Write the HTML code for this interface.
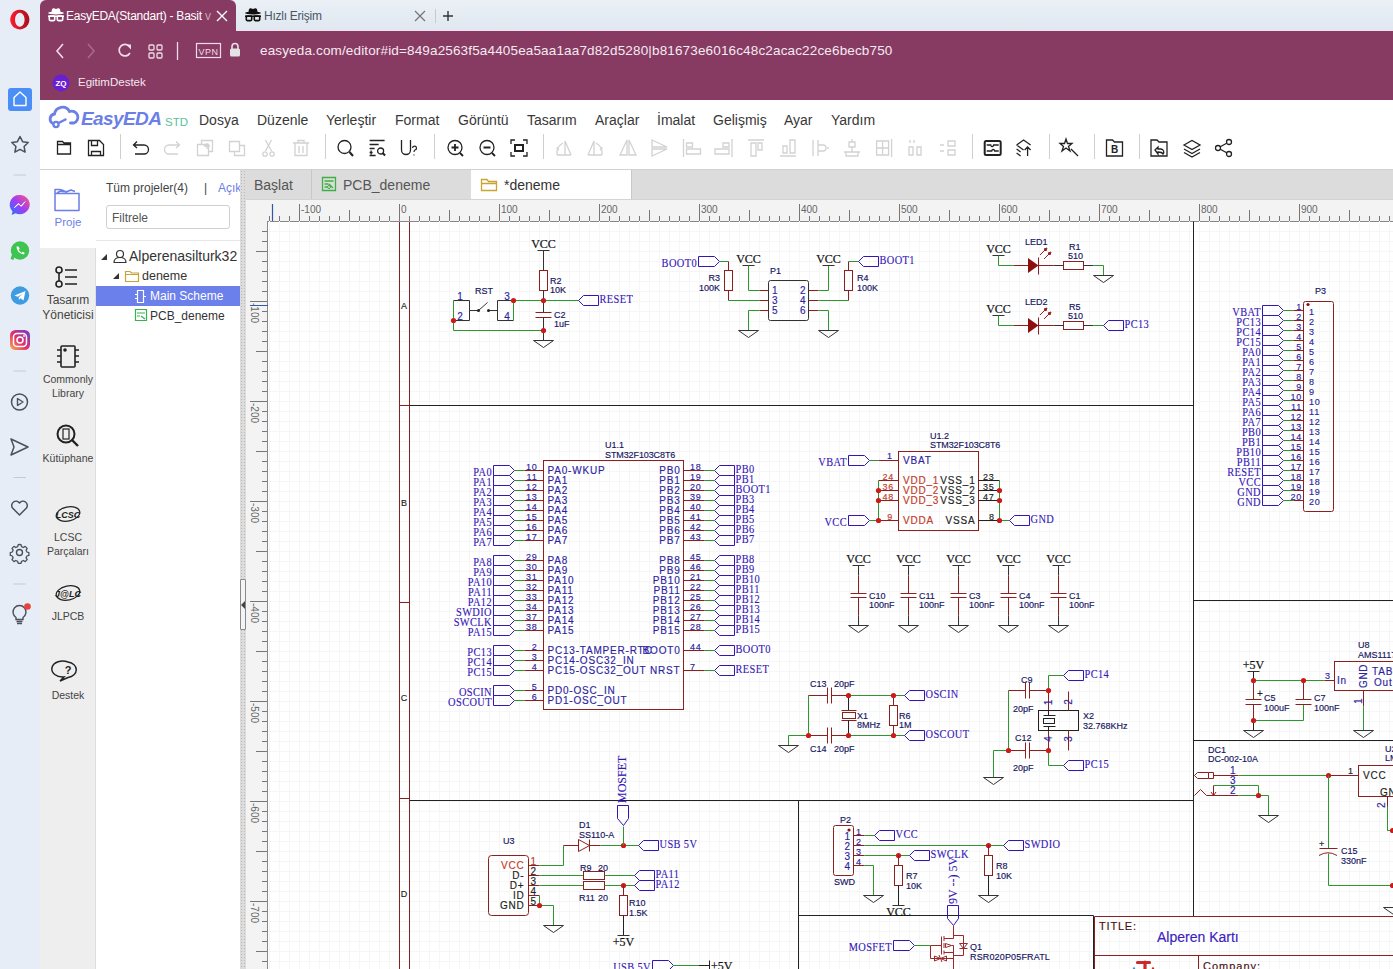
<!DOCTYPE html>
<html><head><meta charset="utf-8">
<style>
*{margin:0;padding:0;box-sizing:border-box}
html,body{width:1393px;height:969px;overflow:hidden;background:#fff;font-family:"Liberation Sans",sans-serif}
.abs{position:absolute}
.t{position:absolute;white-space:nowrap;line-height:1}
#opera{left:0;top:0;width:40px;height:969px;background:#e6edf6}
#tabbar{left:40px;top:0;width:1353px;height:31px;background:linear-gradient(#ebf0f6,#dfe7f0)}
#acttab{left:40px;top:0;width:196px;height:31px;background:#873b63;border-radius:6px 6px 0 0}
#addr{left:40px;top:31px;width:1353px;height:69px;background:#873b63}
#menu{left:40px;top:100px;width:1353px;height:69px;background:#fff}
#menuline{left:40px;top:169px;width:1353px;height:1px;background:#d2d2d2}
#iconcol{left:40px;top:170px;width:56px;height:799px;background:#eeeeee;border-right:1px solid #dedede}
#proj{left:40px;top:170px;width:56px;height:78px;background:#fff}
#tree{left:96px;top:170px;width:144px;height:799px;background:#fff}
#split{z-index:5;left:240px;top:170px;width:6px;height:800px;background:#dcdcdc;background-image:radial-gradient(#b9b9b9 0.8px,transparent 1px);background-size:3px 3px}
#doctabs{left:246px;top:170px;width:1147px;height:30px;background:#dcdcdc}
#ruler{left:246px;top:200px;width:1147px;height:770px;background:#f3f3f3}
#canvas{left:268px;top:221px;width:1125px;height:748px;background:#fff}
.menu{font-size:14px;color:#383838;top:112.5px}
.lbl{font-size:11px;color:#444;text-align:center;width:56px;left:40px}
</style></head><body>
<div id="opera" class="abs"></div>
<div id="tabbar" class="abs"></div>
<div id="acttab" class="abs"></div>
<div id="addr" class="abs"></div>
<div id="menu" class="abs"></div>
<div id="menuline" class="abs"></div>
<div class="abs" style="left:236px;top:30px;width:1157px;height:1px;background:#f3dcec"></div>
<div id="iconcol" class="abs"></div>
<div id="proj" class="abs"></div>
<div id="tree" class="abs"></div>
<div id="split" class="abs"></div>
<div id="doctabs" class="abs"></div>
<div id="ruler" class="abs"></div>
<div id="canvas" class="abs"></div>

<!-- Opera sidebar icons -->
<svg class="abs" style="left:0;top:0" width="40" height="969">
 <defs><linearGradient id="gop" x1="0" y1="0" x2="1" y2="0"><stop offset="0" stop-color="#ff1b2d"/><stop offset="1" stop-color="#a8101e"/></linearGradient></defs>
 <path d="M19.8 9.8a9.6 9.8 0 1 0 0.01 0z M19.8 12.8a4.8 7 0 1 1 -0.01 0z" fill="url(#gop)" fill-rule="evenodd"/>
 <rect x="8" y="88" width="24" height="23" rx="3" fill="#4b8ef6"/>
 <path d="M14 105.5V97.5L20 92L26 97.5V105.5Z" fill="none" stroke="#fff" stroke-width="1.4" stroke-linejoin="round"/>
 <path d="M20 136.5l2.6 5.2l5.6.8l-4.1 4l1 5.6l-5.1-2.7l-5.1 2.7l1-5.6l-4.1-4l5.6-.8z" fill="none" stroke="#4a505c" stroke-width="1.5" stroke-linejoin="round"/>
 <path d="M13.5 175H26M13.5 371H26M13.5 477.5H26M13.5 584H26" stroke="#c5cad3" stroke-width="1"/>
 <defs>
  <linearGradient id="gm" x1="0" y1="1" x2="1" y2="0"><stop offset="0" stop-color="#1a7bff"/><stop offset=".5" stop-color="#a33bf2"/><stop offset="1" stop-color="#ff5a7c"/></linearGradient>
  <linearGradient id="gi" x1="0" y1="1" x2="1" y2="0"><stop offset="0" stop-color="#fdb245"/><stop offset=".45" stop-color="#e3306a"/><stop offset="1" stop-color="#6a3bd2"/></linearGradient>
 </defs>
 <path d="M20 195a10 9.6 0 1 1 -4.5 18.3l-3.8 1.6l.8-3.6a9.6 9.6 0 0 1 7.5 -16.3z" fill="url(#gm)"/>
 <path d="M14.5 207.5l3.8-4l2.6 2.4l4.2-4.2l-3.8 4.6l-2.6-2.4z" fill="#fff" stroke="#fff" stroke-width="1"/>
 <circle cx="20" cy="250.5" r="9.2" fill="#3fc351"/>
 <path d="M12 259.5l1.2-4" stroke="#3fc351" stroke-width="3"/>
 <path d="M16.5 246.5q0 6 7 8l1.4-1.6l-2.2-1.2l-1 1q-2-1-3-3l1-1l-1.2-2.2z" fill="#fff"/>
 <circle cx="20" cy="295.5" r="9.2" fill="#3f9ce0"/>
 <path d="M14.5 295.5l11-4.5l-2 9.5l-3-2.2l-1.5 1.8l-.3-2.8l4-3.6l-5 3z" fill="#fff"/>
 <rect x="10" y="330" width="20" height="20" rx="5.5" fill="url(#gi)"/>
 <rect x="13.5" y="333.5" width="13" height="13" rx="3.5" fill="none" stroke="#fff" stroke-width="1.5"/>
 <circle cx="20" cy="340" r="3" fill="none" stroke="#fff" stroke-width="1.5"/>
 <circle cx="24" cy="336" r=".9" fill="#fff"/>
 <circle cx="19.5" cy="402" r="8" fill="none" stroke="#4a505c" stroke-width="1.5"/>
 <path d="M17.5 398.5v7l5.5-3.5z" fill="none" stroke="#4a505c" stroke-width="1.4" stroke-linejoin="round"/>
 <path d="M11 439l17 8l-17 8l3-8z" fill="none" stroke="#4a505c" stroke-width="1.5" stroke-linejoin="round"/>
 <path d="M19.5 515l-7-7a4 4 0 0 1 7-5a4 4 0 0 1 7 5z" fill="none" stroke="#4a505c" stroke-width="1.5" stroke-linejoin="round"/>
 <circle cx="19.5" cy="552.5" r="3" fill="none" stroke="#4a505c" stroke-width="1.4"/>
 <path d="M19.5 544.5l1.5 .2l.6 2l1.8 .8l1.8-1.1l2 2l-1.1 1.8l.8 1.8l2 .6v2.8l-2 .6l-.8 1.8l1.1 1.8l-2 2l-1.8-1.1l-1.8 .8l-.6 2h-2.8l-.6-2l-1.8-.8l-1.8 1.1l-2-2l1.1-1.8l-.8-1.8l-2-.6v-2.8l2-.6l.8-1.8l-1.1-1.8l2-2l1.8 1.1l1.8-.8l.6-2z" fill="none" stroke="#4a505c" stroke-width="1.3" stroke-linejoin="round"/>
 <path d="M16 617.5a6.5 6.5 0 1 1 7 0v2h-7z M16.5 621.5h6M17 623.5h5" fill="none" stroke="#4a505c" stroke-width="1.4"/>
 <circle cx="27.5" cy="606.5" r="3.3" fill="#e8423a"/>
</svg>

<!-- tab bar -->
<svg class="abs" style="left:47px;top:7px" width="18" height="16">
 <path d="M4.5 5.2Q4.6 1 6.8 1.3L9 2.1L11.2 1.3Q13.4 1 13.5 5.2Z" fill="#fff"/>
 <ellipse cx="9" cy="6" rx="8" ry="1.5" fill="#fff"/>
 <path d="M1 9.2H17" stroke="#fff" stroke-width="1.6"/>
 <rect x="2.3" y="9" width="5.4" height="4.6" rx="1" fill="none" stroke="#fff" stroke-width="1.6"/>
 <rect x="10.3" y="9" width="5.4" height="4.6" rx="1" fill="none" stroke="#fff" stroke-width="1.6"/>
</svg>
<div class="t" style="left:66px;top:10px;font-size:12px;letter-spacing:-0.25px;color:#fff">EasyEDA(Standart) - Basit <span style="color:#c9a3b6">v</span></div>
<svg class="abs" style="left:216px;top:10px" width="12" height="12"><path d="M1 1L11 11M11 1L1 11" stroke="#fff" stroke-width="1.4"/></svg>
<svg class="abs" style="left:244px;top:7px" width="18" height="16">
 <path d="M4.5 5.2Q4.6 1 6.8 1.3L9 2.1L11.2 1.3Q13.4 1 13.5 5.2Z" fill="#111"/>
 <ellipse cx="9" cy="6" rx="8" ry="1.5" fill="#111"/>
 <path d="M1 9.2H17" stroke="#111" stroke-width="1.6"/>
 <rect x="2.3" y="9" width="5.4" height="4.6" rx="1" fill="none" stroke="#111" stroke-width="1.6"/>
 <rect x="10.3" y="9" width="5.4" height="4.6" rx="1" fill="none" stroke="#111" stroke-width="1.6"/>
</svg>
<div class="t" style="left:264px;top:10px;font-size:12px;letter-spacing:-0.25px;color:#4a5563">Hızlı Erişim</div>
<svg class="abs" style="left:414px;top:9px" width="40" height="14">
 <path d="M1 2L11 12M11 2L1 12" stroke="#777" stroke-width="1.3"/>
 <path d="M21.5 0V14" stroke="#c5cbd3"/>
 <path d="M29 7H39M34 2V12" stroke="#333" stroke-width="1.4"/>
</svg>

<!-- address bar -->
<svg class="abs" style="left:50px;top:40px" width="190" height="22">
 <path d="M13 4L7 11L13 18" fill="none" stroke="#f0dce6" stroke-width="1.6"/>
 <path d="M38 4L44 11L38 18" fill="none" stroke="#a86a8a" stroke-width="1.6"/>
 <path d="M79.5 6.5A5.8 5.8 0 1 0 80 13" fill="none" stroke="#f0dce6" stroke-width="1.7"/>
 <path d="M76 4.5h5v5z" fill="#f0dce6"/>
 <rect x="99" y="5" width="5" height="5" rx="1" fill="none" stroke="#f0dce6" stroke-width="1.3"/>
 <rect x="107" y="5" width="5" height="5" rx="1" fill="none" stroke="#f0dce6" stroke-width="1.3"/>
 <rect x="99" y="13" width="5" height="5" rx="1" fill="none" stroke="#f0dce6" stroke-width="1.3"/>
 <rect x="107" y="13" width="5" height="5" rx="1" fill="none" stroke="#f0dce6" stroke-width="1.3"/>
 <path d="M127.5 2V20" stroke="#f0dce6" stroke-width="1.3"/>
 <rect x="146.5" y="3.5" width="24" height="14" fill="none" stroke="#f0dce6" stroke-width="1.2"/>
 <text x="158.5" y="14.5" font-size="9" fill="#f0dce6" text-anchor="middle" font-family="'Liberation Sans',sans-serif" letter-spacing="0.5">VPN</text>
 <rect x="180" y="8.5" width="10" height="8" rx="1.5" fill="#e3e3e6"/>
 <path d="M182 9V6.5a3 3 0 0 1 6 0v2.5" fill="none" stroke="#e3e3e6" stroke-width="1.6"/>
</svg>
<div class="t" style="left:260px;top:44px;font-size:13.5px;color:#f6eaf1;letter-spacing:0.15px">easyeda.com/editor#id=849a2563f5a4405ea5aa1aa7d82d5280|b81673e6016c48c2acac22ce6becb750</div>

<!-- bookmark -->
<svg class="abs" style="left:52px;top:74px" width="18" height="18">
 <circle cx="9" cy="9" r="8.5" fill="#6a1fd0"/>
 <text x="9" y="12" font-size="8" font-weight="bold" fill="#fff" text-anchor="middle" font-family="'Liberation Sans',sans-serif">ZQ</text>
</svg>
<div class="t" style="left:78px;top:77px;font-size:11.5px;color:#f5e6ee">EgitimDestek</div>

<!-- EasyEDA logo -->
<svg class="abs" style="left:46px;top:104px" width="146" height="30">
 <path d="M7 19.5a5 5 0 0 1 1.5-9.5a8 8 0 0 1 15-2.5a6 6 0 0 1 4.5 11.5h-3.5" fill="none" stroke="#6b7fe6" stroke-width="2.8" stroke-linecap="round"/>
 <circle cx="10" cy="20.5" r="2.6" fill="none" stroke="#6b7fe6" stroke-width="2.3"/>
 <path d="M12.5 19l7-3.5" stroke="#6b7fe6" stroke-width="2.4" stroke-linecap="round"/>
 <text x="35" y="20.5" font-size="19" font-weight="bold" font-style="italic" fill="#6b7fe6" font-family="'Liberation Sans',sans-serif" letter-spacing="-0.6">EasyEDA</text>
 <text x="119" y="21.5" font-size="11.5" fill="#5bbf9c" font-family="'Liberation Sans',sans-serif">STD</text>
</svg>
<div class="t menu" style="left:199px">Dosya</div>
<div class="t menu" style="left:257px">Düzenle</div>
<div class="t menu" style="left:326px">Yerleştir</div>
<div class="t menu" style="left:395px">Format</div>
<div class="t menu" style="left:458px">Görüntü</div>
<div class="t menu" style="left:527px">Tasarım</div>
<div class="t menu" style="left:595px">Araçlar</div>
<div class="t menu" style="left:657px">İmalat</div>
<div class="t menu" style="left:713px">Gelişmiş</div>
<div class="t menu" style="left:784px">Ayar</div>
<div class="t menu" style="left:831px">Yardım</div>

<svg class="abs" style="left:0;top:0" width="1393" height="170"><path d="M120.5 134V159" stroke="#cfcfcf" stroke-width="1"/><path d="M325.5 134V159" stroke="#cfcfcf" stroke-width="1"/><path d="M434.5 134V159" stroke="#cfcfcf" stroke-width="1"/><path d="M543.5 134V159" stroke="#cfcfcf" stroke-width="1"/><path d="M972.5 134V159" stroke="#cfcfcf" stroke-width="1"/><path d="M1049.5 134V159" stroke="#cfcfcf" stroke-width="1"/><path d="M1094.5 134V159" stroke="#cfcfcf" stroke-width="1"/><path d="M1139.5 134V159" stroke="#cfcfcf" stroke-width="1"/><g transform="translate(64 148)" stroke="#222" fill="none" stroke-width="1.3"><path d="M-6.5 -3.5h13v9.5h-13z M-6.5 -3.5v-3h5l1.5 1.5h6.5v1.5"/></g><g transform="translate(96 148)" stroke="#222" fill="none" stroke-width="1.3"><path d="M-7.5 -7.5h11l4 4v11h-15z M-4.5 -7.5v5h6v-5 M-4.5 7.5v-4h9v4"/></g><g transform="translate(141 148)" stroke="#222" fill="none" stroke-width="1.3"><path d="M-7 -3h10a4.5 4.5 0 0 1 0 9h-9 M-4 -6.5l-3.5 3.5l3.5 3"/></g><g transform="translate(172 148)" stroke="#d2d2d2" fill="none" stroke-width="1.3"><path d="M7 -3h-10a4.5 4.5 0 0 0 0 9h9 M4 -6.5l3.5 3.5l-3.5 3"/></g><g transform="translate(205 148)" stroke="#d2d2d2" fill="none" stroke-width="1.3"><path d="M-7.5 -3.5h11v11h-11z M-3.5 -3.5v-4h11v11h-4 M2 -5v6M-1 -2h6"/></g><g transform="translate(237 148)" stroke="#d2d2d2" fill="none" stroke-width="1.3"><path d="M-7.5 -6.5h10v10h-10z M-2.5 3.5v4h10v-10h-5"/></g><g transform="translate(268.5 148)" stroke="#d2d2d2" fill="none" stroke-width="1.3"><path d="M-3 -8l6 11M3 -8l-6 11"/><circle cx="-3.5" cy="6" r="2.2"/><circle cx="3.5" cy="6" r="2.2"/></g><g transform="translate(301 148)" stroke="#d2d2d2" fill="none" stroke-width="1.3"><path d="M-8 -5h16M-3 -5v-2.5h6v2.5M-6 -5v12.5h12v-12.5M-2 -2v7M2 -2v7"/></g><g transform="translate(345.5 148)" stroke="#222" fill="none" stroke-width="1.3"><circle cx="-1" cy="-1" r="6.5"/><path d="M4 4l3.5 4" stroke-width="2"/></g><g transform="translate(377.6 148)" stroke="#222" fill="none" stroke-width="1.3"><path d="M-8 -7.5h15M-8 -3.5h9M-8 0.5h5M-8 7.5h6M-6.5 2.5v4M-8 4.5h3"/><circle cx="3" cy="3" r="3"/><path d="M5 5l2.5 2.5" stroke-width="2"/></g><g transform="translate(409 148)" stroke="#222" fill="none" stroke-width="1.3"><path d="M-7.5 -8v10a4.5 4.5 0 0 0 9 0v-10"/><path d="M3.5 0a2 2 0 1 1 2.5 2c-1 .5-1 1-1 2M5 6.5v1" stroke-width="1.2"/></g><g transform="translate(455 148)" stroke="#222" fill="none" stroke-width="1.3"><circle cx="0" cy="-0.5" r="7"/><path d="M-3.5 -0.5h7M0 -4v7M5 5l3 3" stroke-width="1.8"/></g><g transform="translate(487 148)" stroke="#222" fill="none" stroke-width="1.3"><circle cx="0" cy="-0.5" r="7"/><path d="M-3.5 -0.5h7M5 5l3 3" stroke-width="1.8"/></g><g transform="translate(519 148)" stroke="#222" fill="none" stroke-width="1.3"><path d="M-8 -4v-4h4M4 -8h4v4M8 4v4h-4M-4 8h-4v-4"/><rect x="-4" y="-3" width="8" height="6" stroke-width="2"/></g><g transform="translate(564 148)" stroke="#d2d2d2" fill="none" stroke-width="1.3"><path d="M-7 7h14M1 -7v14M1 -7l6 14M-7 7q-1-8 6-12M-5 -1l-2 1l2 2"/></g><g transform="translate(595 148)" stroke="#d2d2d2" fill="none" stroke-width="1.3"><path d="M-7 7h14M-1 -7v14M-1 -7l-6 14M7 7q1-8-6-12M5 -1l2 1l-2 2"/></g><g transform="translate(628 148)" stroke="#d2d2d2" fill="none" stroke-width="1.3"><path d="M-1 -8v15h-7zM1 -8v15h7z"/></g><g transform="translate(659 148)" stroke="#d2d2d2" fill="none" stroke-width="1.3"><path d="M-7 -8l15 7h-15zM-7 1h15l-15 7z"/></g><g transform="translate(691.5 148)" stroke="#d2d2d2" fill="none" stroke-width="1.3"><path d="M-8 -9v18M-5 -5h6v4h-6zM-5 1h14v5h-14z"/></g><g transform="translate(724 148)" stroke="#d2d2d2" fill="none" stroke-width="1.3"><path d="M8 -9v18M5 -5h-6v4h6zM5 1h-14v5h14z"/></g><g transform="translate(756 148)" stroke="#d2d2d2" fill="none" stroke-width="1.3"><path d="M-8 -8h16M-5 -5v13h5v-13zM2 -5v7h4v-7z"/></g><g transform="translate(788 148)" stroke="#d2d2d2" fill="none" stroke-width="1.3"><path d="M-8 8h16M-5 5v-7h4v7zM2 5v-13h5v13z"/></g><g transform="translate(820 148)" stroke="#d2d2d2" fill="none" stroke-width="1.3"><path d="M-7 -8v16M-2 -8v16M-2 -3h5a3 3 0 0 1 0 6h-5M7 0h2"/></g><g transform="translate(852 148)" stroke="#d2d2d2" fill="none" stroke-width="1.3"><path d="M-8 4h16M-6 4v4h12v-4M0 -9v3M-3 -6h6v5h-6zM0 -1v5"/></g><g transform="translate(883.6 148)" stroke="#d2d2d2" fill="none" stroke-width="1.3"><path d="M-7 -7h12v14h-12zM-1 -7v14M-7 0h12M8 -9v18"/></g><g transform="translate(916 148)" stroke="#d2d2d2" fill="none" stroke-width="1.3"><path d="M-6 -8v3M-2 -8v3M-7 -1h4v8h-4zM1 -1h4v8h-4z"/></g><g transform="translate(948 148)" stroke="#d2d2d2" fill="none" stroke-width="1.3"><path d="M-8 -3h4M-8 3h4M0 -7h7v5h-7zM0 2h7v5h-7z"/></g><g transform="translate(992.7 148)" stroke="#222" fill="none" stroke-width="1.3"><rect x="-8" y="-7" width="16" height="14" rx="1.5" stroke-width="2"/><path d="M-6 -3h4a1.5 1.5 0 0 0 3 0h5M-6 3h5a1.5 1.5 0 0 1 3 0h4"/></g><g transform="translate(1024.6 148)" stroke="#222" fill="none" stroke-width="1.3"><path d="M-8 -3l7-5l7 5M-8 1l4 3M-8 5l4 3M3 -1v9M0 2l3-3l3 3M-8 -3l7 5"/></g><g transform="translate(1070 148)" stroke="#222" fill="none" stroke-width="1.3"><path d="M-4 -9l1.5 4.5l4.5 0l-3.5 3l1.5 4.5l-4-3l-4 3l1.5-4.5l-3.5-3h4.5z M1 1l7 7" stroke-width="1.3"/></g><g transform="translate(1114.5 148)" stroke="#222" fill="none" stroke-width="1.3"><path d="M-8 -8h6l2 2h8v14h-16z"/><text x="0" y="5" font-size="10" font-weight="bold" fill="#222" stroke="none" text-anchor="middle" font-family="'Liberation Sans',sans-serif">B</text></g><g transform="translate(1159 148)" stroke="#222" fill="none" stroke-width="1.3"><path d="M-8 -8h6l2 2h8v14h-16z M-4 2l3-3v2h3a3 3 0 0 1 2 5q-1-2-5-2v2z" stroke-width="1.3"/></g><g transform="translate(1192 148)" stroke="#222" fill="none" stroke-width="1.3"><path d="M-8 -3l8-4.5l8 4.5l-8 4.5z M-8 1l8 4.5l8-4.5 M-8 4.5l8 4.5l8-4.5" stroke-width="1.3"/></g><g transform="translate(1224 148)" stroke="#222" fill="none" stroke-width="1.3"><circle cx="-6" cy="0" r="2.5"/><circle cx="5" cy="-6" r="2.5"/><circle cx="5" cy="6" r="2.5"/><path d="M-3.8 -1.2l6.5-3.6M-3.8 1.2l6.5 3.6"/></g></svg>

<!-- left panel -->
<svg class="abs" style="left:52px;top:186px" width="30" height="26">
 <path d="M3 7.5h24v17h-24z M3 7.5v-4h5l2 2h6M5 7l5-3l4 2l5-2l4 1.5" fill="none" stroke="#6b7fe6" stroke-width="1.5" stroke-linejoin="round"/>
</svg>
<div class="t" style="left:40px;width:56px;text-align:center;top:217px;font-size:11.5px;color:#6b7fe6">Proje</div>
<div class="t" style="left:106px;top:182px;font-size:12px;color:#444">Tüm projeler(4)</div>
<div class="t" style="left:204px;top:182px;font-size:12px;color:#444">|</div>
<div class="t" style="left:218px;top:182px;font-size:12px;color:#6b7fe6">Açık</div>
<div class="abs" style="left:106px;top:205px;width:124px;height:24px;border:1px solid #cfcfcf;border-radius:3px;background:#fff"></div>
<div class="t" style="left:112px;top:212px;font-size:12px;color:#555">Filtrele</div>
<div class="abs" style="left:96px;top:240px;width:144px;height:1px;background:#e6e6e6"></div>
<svg class="abs" style="left:96px;top:246px" width="144" height="80">
 <path d="M5 14L11 14L11 8z" fill="#333"/>
 <circle cx="24" cy="8" r="3.5" fill="none" stroke="#333" stroke-width="1.2"/>
 <path d="M18 16.5q0-5 6-5q6 0 6 5z" fill="none" stroke="#333" stroke-width="1.2"/>
 <path d="M17 33L23 33L23 27z" fill="#333"/>
 <path d="M29.5 25.5v10h13v-8.5h-7l-1.5-1.5z M29.5 28.5h13" fill="none" stroke="#c9a432" stroke-width="1.2"/>
 <rect x="0" y="40" width="144" height="20" fill="#6b80ea"/>
 <path d="M41.5 44.5h6v12h-6z M39 48.5h3M39 52.5h3M47 50.5h3" fill="none" stroke="#fff" stroke-width="1.2"/>
 <path d="M39.5 63.5h11v11h-11z M41 67h8M41 70h3M45 70l4 3" fill="none" stroke="#37b24d" stroke-width="1.2"/>
</svg>
<div class="t" style="left:129px;top:249px;font-size:14px;color:#333">Alperenasilturk32</div>
<div class="t" style="left:142px;top:270px;font-size:12.5px;color:#333">deneme</div>
<div class="t" style="left:150px;top:290px;font-size:12px;color:#fff">Main Scheme</div>
<div class="t" style="left:150px;top:310px;font-size:12px;color:#333">PCB_deneme</div>

<svg class="abs" style="left:40px;top:262px" width="56" height="460" fill="none" stroke="#222" stroke-width="1.6">
 <circle cx="19" cy="8" r="3"/><circle cx="19" cy="22" r="3"/><path d="M19 11V19M25 8H37M25 15H37M25 22H37"/>
 <rect x="21" y="84" width="14" height="21" rx="1"/><path d="M17 88h4M17 94h4M17 100h4M35 88h4M35 94h4M35 100h4" stroke-width="1.4"/><circle cx="25" cy="88" r="1" fill="#222"/>
 <circle cx="26" cy="172" r="8.5" stroke-width="2"/><path d="M32 178l6 6" stroke-width="2.4"/><rect x="23" y="167" width="6" height="10" stroke-width="1.2"/>
 <ellipse cx="28" cy="252" rx="12" ry="7" stroke-width="1.2" transform="rotate(-12 28 252)"/>
 <text x="28" y="255.5" font-size="9" font-style="italic" font-weight="bold" fill="#222" stroke="none" text-anchor="middle" font-family="'Liberation Sans',sans-serif">LCSC</text>
 <ellipse cx="28" cy="331" rx="12" ry="7" stroke-width="1.2" transform="rotate(-12 28 331)"/>
 <text x="28" y="334.5" font-size="9" font-style="italic" font-weight="bold" fill="#222" stroke="none" text-anchor="middle" font-family="'Liberation Sans',sans-serif">J@LC</text>
 <path d="M28 400a11 8 0 1 0 -4 15l-4 4l8-3.5a11 8 0 0 0 -0 -15.5z" stroke-width="1.5"/>
 <text x="28" y="412" font-size="11" font-weight="bold" fill="#222" stroke="none" text-anchor="middle" font-family="'Liberation Sans',sans-serif">?</text>
</svg>
<div class="t lbl" style="top:294px;font-size:12px">Tasarım</div>
<div class="t lbl" style="top:309px;font-size:12px">Yöneticisi</div>
<div class="t lbl" style="top:374px;font-size:10.5px">Commonly</div>
<div class="t lbl" style="top:388px;font-size:10.5px">Library</div>
<div class="t lbl" style="top:453px;font-size:10.5px">Kütüphane</div>
<div class="t lbl" style="top:532px;font-size:10.5px">LCSC</div>
<div class="t lbl" style="top:546px;font-size:10.5px">Parçaları</div>
<div class="t lbl" style="top:611px;font-size:10.5px">JLPCB</div>
<div class="t lbl" style="top:690px;font-size:10.5px">Destek</div>

<!-- splitter handle -->
<div class="abs" style="z-index:6;left:240px;top:579px;width:6px;height:51px;background:#f4f4f4;border:1px solid #888;border-radius:1px"></div>
<svg class="abs" style="z-index:7;left:240px;top:600px" width="6" height="10"><path d="M1 5L5 1V9z" fill="#444"/></svg>

<!-- doc tabs -->
<div class="abs" style="left:311px;top:170px;width:1px;height:30px;background:#c8c8c8"></div>
<div class="abs" style="left:471px;top:170px;width:160px;height:30px;background:#fff"></div>
<div class="abs" style="left:631px;top:170px;width:1px;height:30px;background:#c8c8c8"></div>
<div class="t" style="left:254px;top:178px;font-size:14px;color:#555">Başlat</div>
<svg class="abs" style="left:321px;top:176px" width="16" height="16"><path d="M1.5 1.5h13v13h-13z M3.5 5h9M3.5 8h4M8 8l4 4M3.5 11h3" fill="none" stroke="#3cb043" stroke-width="1.3"/><circle cx="8" cy="11" r="1.5" fill="none" stroke="#3cb043"/></svg>
<div class="t" style="left:343px;top:178px;font-size:14px;color:#555">PCB_deneme</div>
<svg class="abs" style="left:480px;top:176px" width="18" height="16"><path d="M1.5 4.5v10h15v-9h-8l-1.5-2h-5.5z M1.5 7.5h15" fill="none" stroke="#c9a432" stroke-width="1.3"/></svg>
<div class="t" style="left:504px;top:178px;font-size:14px;color:#333">*deneme</div>
<div class="abs" style="left:246px;top:199px;width:1147px;height:1px;background:#d3d3d3"></div>

<svg class="abs" style="left:0;top:0" width="1393" height="969" viewBox="0 0 1393 969" font-family="'Liberation Sans',sans-serif">
<defs><clipPath id="cv"><rect x="268" y="221" width="1125" height="748"/></clipPath></defs>
<path d="M269.5 216V221M279.5 216V221M289.5 216V221M299.5 204V221M309.5 216V221M319.5 216V221M329.5 216V221M339.5 216V221M349.5 210V221M359.5 216V221M369.5 216V221M379.5 216V221M389.5 216V221M399.5 204V221M409.5 216V221M419.5 216V221M429.5 216V221M439.5 216V221M449.5 210V221M459.5 216V221M469.5 216V221M479.5 216V221M489.5 216V221M499.5 204V221M509.5 216V221M519.5 216V221M529.5 216V221M539.5 216V221M549.5 210V221M559.5 216V221M569.5 216V221M579.5 216V221M589.5 216V221M599.5 204V221M609.5 216V221M619.5 216V221M629.5 216V221M639.5 216V221M649.5 210V221M659.5 216V221M669.5 216V221M679.5 216V221M689.5 216V221M699.5 204V221M709.5 216V221M719.5 216V221M729.5 216V221M739.5 216V221M749.5 210V221M759.5 216V221M769.5 216V221M779.5 216V221M789.5 216V221M799.5 204V221M809.5 216V221M819.5 216V221M829.5 216V221M839.5 216V221M849.5 210V221M859.5 216V221M869.5 216V221M879.5 216V221M889.5 216V221M899.5 204V221M909.5 216V221M919.5 216V221M929.5 216V221M939.5 216V221M949.5 210V221M959.5 216V221M969.5 216V221M979.5 216V221M989.5 216V221M999.5 204V221M1009.5 216V221M1019.5 216V221M1029.5 216V221M1039.5 216V221M1049.5 210V221M1059.5 216V221M1069.5 216V221M1079.5 216V221M1089.5 216V221M1099.5 204V221M1109.5 216V221M1119.5 216V221M1129.5 216V221M1139.5 216V221M1149.5 210V221M1159.5 216V221M1169.5 216V221M1179.5 216V221M1189.5 216V221M1199.5 204V221M1209.5 216V221M1219.5 216V221M1229.5 216V221M1239.5 216V221M1249.5 210V221M1259.5 216V221M1269.5 216V221M1279.5 216V221M1289.5 216V221M1299.5 204V221M1309.5 216V221M1319.5 216V221M1329.5 216V221M1339.5 216V221M1349.5 210V221M1359.5 216V221M1369.5 216V221M1379.5 216V221M1389.5 216V221M262 231.5H267M262 241.5H267M256 251.5H267M262 261.5H267M262 271.5H267M262 281.5H267M262 291.5H267M250 301.5H267M262 311.5H267M262 321.5H267M262 331.5H267M262 341.5H267M256 351.5H267M262 361.5H267M262 371.5H267M262 381.5H267M262 391.5H267M250 401.5H267M262 411.5H267M262 421.5H267M262 431.5H267M262 441.5H267M256 451.5H267M262 461.5H267M262 471.5H267M262 481.5H267M262 491.5H267M250 501.5H267M262 511.5H267M262 521.5H267M262 531.5H267M262 541.5H267M256 551.5H267M262 561.5H267M262 571.5H267M262 581.5H267M262 591.5H267M250 601.5H267M262 611.5H267M262 621.5H267M262 631.5H267M262 641.5H267M256 651.5H267M262 661.5H267M262 671.5H267M262 681.5H267M262 691.5H267M250 701.5H267M262 711.5H267M262 721.5H267M262 731.5H267M262 741.5H267M256 751.5H267M262 761.5H267M262 771.5H267M262 781.5H267M262 791.5H267M250 801.5H267M262 811.5H267M262 821.5H267M262 831.5H267M262 841.5H267M256 851.5H267M262 861.5H267M262 871.5H267M262 881.5H267M262 891.5H267M250 901.5H267M262 911.5H267M262 921.5H267M262 931.5H267M262 941.5H267M256 951.5H267M262 961.5H267" stroke="#777" stroke-width="1"/><text x="301" y="213" font-size="10" fill="#666">-100</text><text x="401" y="213" font-size="10" fill="#666">0</text><text x="501" y="213" font-size="10" fill="#666">100</text><text x="601" y="213" font-size="10" fill="#666">200</text><text x="701" y="213" font-size="10" fill="#666">300</text><text x="801" y="213" font-size="10" fill="#666">400</text><text x="901" y="213" font-size="10" fill="#666">500</text><text x="1001" y="213" font-size="10" fill="#666">600</text><text x="1101" y="213" font-size="10" fill="#666">700</text><text x="1201" y="213" font-size="10" fill="#666">800</text><text x="1301" y="213" font-size="10" fill="#666">900</text><text x="0" y="0" font-size="10" fill="#666" transform="translate(251 303) rotate(90)">-100</text><text x="0" y="0" font-size="10" fill="#666" transform="translate(251 403) rotate(90)">-200</text><text x="0" y="0" font-size="10" fill="#666" transform="translate(251 503) rotate(90)">-300</text><text x="0" y="0" font-size="10" fill="#666" transform="translate(251 603) rotate(90)">-400</text><text x="0" y="0" font-size="10" fill="#666" transform="translate(251 703) rotate(90)">-500</text><text x="0" y="0" font-size="10" fill="#666" transform="translate(251 803) rotate(90)">-600</text><text x="0" y="0" font-size="10" fill="#666" transform="translate(251 903) rotate(90)">-700</text>
<path d="M267.5 221V969M267 221.5H1393" stroke="#888" stroke-width="1"/>
<path d="M272.5 204V221M250 305.5H268" stroke="#3355aa" stroke-width="1.2"/>
<g clip-path="url(#cv)">
<path d="M269.5 221V969M279.5 221V969M289.5 221V969M299.5 221V969M309.5 221V969M319.5 221V969M329.5 221V969M339.5 221V969M349.5 221V969M359.5 221V969M369.5 221V969M379.5 221V969M389.5 221V969M399.5 221V969M409.5 221V969M419.5 221V969M429.5 221V969M439.5 221V969M449.5 221V969M459.5 221V969M469.5 221V969M479.5 221V969M489.5 221V969M499.5 221V969M509.5 221V969M519.5 221V969M529.5 221V969M539.5 221V969M549.5 221V969M559.5 221V969M569.5 221V969M579.5 221V969M589.5 221V969M599.5 221V969M609.5 221V969M619.5 221V969M629.5 221V969M639.5 221V969M649.5 221V969M659.5 221V969M669.5 221V969M679.5 221V969M689.5 221V969M699.5 221V969M709.5 221V969M719.5 221V969M729.5 221V969M739.5 221V969M749.5 221V969M759.5 221V969M769.5 221V969M779.5 221V969M789.5 221V969M799.5 221V969M809.5 221V969M819.5 221V969M829.5 221V969M839.5 221V969M849.5 221V969M859.5 221V969M869.5 221V969M879.5 221V969M889.5 221V969M899.5 221V969M909.5 221V969M919.5 221V969M929.5 221V969M939.5 221V969M949.5 221V969M959.5 221V969M969.5 221V969M979.5 221V969M989.5 221V969M999.5 221V969M1009.5 221V969M1019.5 221V969M1029.5 221V969M1039.5 221V969M1049.5 221V969M1059.5 221V969M1069.5 221V969M1079.5 221V969M1089.5 221V969M1099.5 221V969M1109.5 221V969M1119.5 221V969M1129.5 221V969M1139.5 221V969M1149.5 221V969M1159.5 221V969M1169.5 221V969M1179.5 221V969M1189.5 221V969M1199.5 221V969M1209.5 221V969M1219.5 221V969M1229.5 221V969M1239.5 221V969M1249.5 221V969M1259.5 221V969M1269.5 221V969M1279.5 221V969M1289.5 221V969M1299.5 221V969M1309.5 221V969M1319.5 221V969M1329.5 221V969M1339.5 221V969M1349.5 221V969M1359.5 221V969M1369.5 221V969M1379.5 221V969M1389.5 221V969M268 231.5H1393M268 241.5H1393M268 251.5H1393M268 261.5H1393M268 271.5H1393M268 281.5H1393M268 291.5H1393M268 301.5H1393M268 311.5H1393M268 321.5H1393M268 331.5H1393M268 341.5H1393M268 351.5H1393M268 361.5H1393M268 371.5H1393M268 381.5H1393M268 391.5H1393M268 401.5H1393M268 411.5H1393M268 421.5H1393M268 431.5H1393M268 441.5H1393M268 451.5H1393M268 461.5H1393M268 471.5H1393M268 481.5H1393M268 491.5H1393M268 501.5H1393M268 511.5H1393M268 521.5H1393M268 531.5H1393M268 541.5H1393M268 551.5H1393M268 561.5H1393M268 571.5H1393M268 581.5H1393M268 591.5H1393M268 601.5H1393M268 611.5H1393M268 621.5H1393M268 631.5H1393M268 641.5H1393M268 651.5H1393M268 661.5H1393M268 671.5H1393M268 681.5H1393M268 691.5H1393M268 701.5H1393M268 711.5H1393M268 721.5H1393M268 731.5H1393M268 741.5H1393M268 751.5H1393M268 761.5H1393M268 771.5H1393M268 781.5H1393M268 791.5H1393M268 801.5H1393M268 811.5H1393M268 821.5H1393M268 831.5H1393M268 841.5H1393M268 851.5H1393M268 861.5H1393M268 871.5H1393M268 881.5H1393M268 891.5H1393M268 901.5H1393M268 911.5H1393M268 921.5H1393M268 931.5H1393M268 941.5H1393M268 951.5H1393M268 961.5H1393" stroke="#f6f6f6" stroke-width="1"/>
<path d="M399.5 221.5L399.5 969.5" stroke="#8c2020" stroke-width="1" fill="none"/>
<path d="M409.5 221.5L409.5 969.5" stroke="#8c2020" stroke-width="1" fill="none"/>
<path d="M399.5 405.5L409.5 405.5" stroke="#8c2020" stroke-width="1" fill="none"/>
<path d="M399.5 602.5L409.5 602.5" stroke="#8c2020" stroke-width="1" fill="none"/>
<path d="M399.5 798.5L409.5 798.5" stroke="#8c2020" stroke-width="1" fill="none"/>
<text x="404" y="309" font-family='"Liberation Sans",sans-serif' font-size="9" fill="#222" stroke="#222" stroke-width="0.15" text-anchor="middle" >A</text>
<text x="404" y="506" font-family='"Liberation Sans",sans-serif' font-size="9" fill="#222" stroke="#222" stroke-width="0.15" text-anchor="middle" >B</text>
<text x="404" y="701" font-family='"Liberation Sans",sans-serif' font-size="9" fill="#222" stroke="#222" stroke-width="0.15" text-anchor="middle" >C</text>
<text x="404" y="897" font-family='"Liberation Sans",sans-serif' font-size="9" fill="#222" stroke="#222" stroke-width="0.15" text-anchor="middle" >D</text>
<path d="M409.5 405.5L1193.5 405.5" stroke="#222" stroke-width="1" fill="none"/>
<path d="M409.5 800.5L1193.5 800.5" stroke="#222" stroke-width="1" fill="none"/>
<path d="M1193.5 221.5L1193.5 916.5" stroke="#222" stroke-width="1" fill="none"/>
<path d="M1193.5 600.5L1393.5 600.5" stroke="#222" stroke-width="1" fill="none"/>
<path d="M1193.5 740.5L1393.5 740.5" stroke="#222" stroke-width="1" fill="none"/>
<path d="M798.5 800.5L798.5 969.5" stroke="#222" stroke-width="1" fill="none"/>
<path d="M798.5 915.5L1093.5 915.5" stroke="#222" stroke-width="1" fill="none"/>
<path d="M1093.5 915.5L1093.5 969.5" stroke="#222" stroke-width="1" fill="none"/>
<path d="M1094.5 916.5L1393.5 916.5" stroke="#8c2020" stroke-width="1" fill="none"/>
<path d="M1094.5 916.5L1094.5 969.5" stroke="#8c2020" stroke-width="1" fill="none"/>
<path d="M1094.5 955.5L1393.5 955.5" stroke="#8c2020" stroke-width="1" fill="none"/>
<path d="M1198.5 955.5L1198.5 969.5" stroke="#8c2020" stroke-width="1" fill="none"/>
<text x="1099" y="930" font-family='"Liberation Sans",sans-serif' font-size="11" fill="#4a1010" stroke="#4a1010" stroke-width="0.15" text-anchor="start" letter-spacing="0.8">TITLE:</text>
<text x="1157" y="942" font-family='"Liberation Sans",sans-serif' font-size="14" fill="#3a22c0" stroke="#3a22c0" stroke-width="0.15" text-anchor="start" >Alperen Kartı</text>
<text x="1203" y="970" font-family='"Liberation Sans",sans-serif' font-size="11" fill="#4a1010" stroke="#4a1010" stroke-width="0.15" text-anchor="start" letter-spacing="1">Company:</text>
<path d="M1137.5 962.5h12M1145 962v8" stroke="#cc2a2a" stroke-width="3.2" stroke-linecap="round"/><circle cx="1134" cy="968.5" r="1.2" fill="#3a9ad0"/><circle cx="1153" cy="968.5" r="1.2" fill="#cc2a2a"/>
<path d="M537.5 250.5L549.5 250.5" stroke="#333" stroke-width="1"/>
<text x="543.5" y="247.5" font-family='"Liberation Serif",serif' font-size="12" fill="#111" stroke="#111" stroke-width="0.2" text-anchor="middle" >VCC</text>
<path d="M543.5 250.5L543.5 270.5" stroke="#333" stroke-width="1" fill="none"/>
<rect x="539.5" y="270.5" width="8" height="20" rx="0" stroke="#8c2020" stroke-width="1" fill="none"/>
<path d="M543.5 290.5L543.5 300.5" stroke="#333" stroke-width="1" fill="none"/>
<path d="M543.5 300.5L543.5 312.5" stroke="#333" stroke-width="1" fill="none"/>
<path d="M535.5 312.5L551.5 312.5" stroke="#8c2020" stroke-width="1" fill="none"/>
<path d="M535.5 317.5L551.5 317.5" stroke="#8c2020" stroke-width="1" fill="none"/>
<path d="M543.5 317.5L543.5 340.5" stroke="#333" stroke-width="1" fill="none"/>
<path d="M533.5 340.5L553.5 340.5L543.5 347.5Z" stroke="#333" stroke-width="1" fill="none"/>
<path d="M453.5 300.5L469.5 300.5L469.5 320.5L453.5 320.5" stroke="#333" stroke-width="1" fill="none"/>
<path d="M513.5 300.5L497.5 300.5L497.5 320.5L513.5 320.5" stroke="#333" stroke-width="1" fill="none"/>
<path d="M453.5 300.5L453.5 330.5L543.5 330.5" stroke="#2f962f" stroke-width="1" fill="none"/>
<path d="M513.5 300.5L513.5 320.5" stroke="#2f962f" stroke-width="1" fill="none"/>
<path d="M469.5 310.5L478.5 310.5" stroke="#333" stroke-width="1" fill="none"/>
<path d="M488.5 310.5L497.5 310.5" stroke="#333" stroke-width="1" fill="none"/>
<path d="M478.5 310.5L487.5 302.5" stroke="#333" stroke-width="1" fill="none"/>
<circle cx="478.5" cy="310.5" r="1.5" fill="#222"/><circle cx="488.5" cy="310.5" r="1.5" fill="#222"/>
<path d="M513.5 300.5L578.5 300.5" stroke="#2f962f" stroke-width="1" fill="none"/>
<path d="M578.5 300.5L583.5 295.5L598.5 295.5L598.5 305.5L583.5 305.5Z" stroke="#3416b8" stroke-width="1" fill="none"/>
<text x="0" y="0" font-family='"Liberation Serif",serif' font-size="11.8" fill="#3416b8" stroke="#3416b8" stroke-width="0.12" text-anchor="start" letter-spacing="0.45" transform="translate(599.5 303.1) scale(0.88 1)">RESET</text>
<circle cx="453.5" cy="320.5" r="2.6" fill="#cc1a1a"/>
<circle cx="513.5" cy="300.5" r="2.6" fill="#cc1a1a"/>
<circle cx="543.5" cy="300.5" r="2.6" fill="#cc1a1a"/>
<circle cx="543.5" cy="330.5" r="2.6" fill="#cc1a1a"/>
<text x="475" y="294" font-family='"Liberation Sans",sans-serif' font-size="9" fill="#141460" stroke="#141460" stroke-width="0.15" text-anchor="start" >RST</text>
<text x="460" y="300" font-family='"Liberation Sans",sans-serif' font-size="10" fill="#2d1fa0" stroke="#2d1fa0" stroke-width="0.15" text-anchor="middle" >1</text>
<text x="460" y="320" font-family='"Liberation Sans",sans-serif' font-size="10" fill="#2d1fa0" stroke="#2d1fa0" stroke-width="0.15" text-anchor="middle" >2</text>
<text x="507" y="300" font-family='"Liberation Sans",sans-serif' font-size="10" fill="#2d1fa0" stroke="#2d1fa0" stroke-width="0.15" text-anchor="middle" >3</text>
<text x="507" y="320" font-family='"Liberation Sans",sans-serif' font-size="10" fill="#2d1fa0" stroke="#2d1fa0" stroke-width="0.15" text-anchor="middle" >4</text>
<text x="550" y="284" font-family='"Liberation Sans",sans-serif' font-size="9" fill="#141460" stroke="#141460" stroke-width="0.15" text-anchor="start" >R2</text>
<text x="550" y="293" font-family='"Liberation Sans",sans-serif' font-size="9" fill="#141460" stroke="#141460" stroke-width="0.15" text-anchor="start" >10K</text>
<text x="554" y="318" font-family='"Liberation Sans",sans-serif' font-size="9" fill="#141460" stroke="#141460" stroke-width="0.15" text-anchor="start" >C2</text>
<text x="554" y="327" font-family='"Liberation Sans",sans-serif' font-size="9" fill="#141460" stroke="#141460" stroke-width="0.15" text-anchor="start" >1uF</text>
<path d="M719.5 261.5L714.5 256.5L698.5 256.5L698.5 266.5L714.5 266.5Z" stroke="#3416b8" stroke-width="1" fill="none"/>
<text x="0" y="0" font-family='"Liberation Serif",serif' font-size="11.8" fill="#3416b8" stroke="#3416b8" stroke-width="0.12" text-anchor="end" letter-spacing="0.45" transform="translate(697.0 266.8) scale(0.88 1)">BOOT0</text>
<path d="M719.5 261.5L728.5 261.5" stroke="#2f962f" stroke-width="1" fill="none"/>
<path d="M728.5 261.5L728.5 270.5" stroke="#8c2020" stroke-width="1" fill="none"/>
<rect x="724.5" y="270.5" width="8" height="20" rx="0" stroke="#8c2020" stroke-width="1" fill="none"/>
<path d="M728.5 290.5L728.5 300.5" stroke="#8c2020" stroke-width="1" fill="none"/>
<path d="M728.5 300.5L759.5 300.5" stroke="#2f962f" stroke-width="1" fill="none"/>
<path d="M759.5 300.5L768.5 300.5" stroke="#8c2020" stroke-width="1" fill="none"/>
<path d="M742.5 265.5L754.5 265.5" stroke="#333" stroke-width="1"/>
<text x="748.5" y="262.5" font-family='"Liberation Serif",serif' font-size="12" fill="#111" stroke="#111" stroke-width="0.2" text-anchor="middle" >VCC</text>
<path d="M748.5 265.5L748.5 290.5L759.5 290.5" stroke="#2f962f" stroke-width="1" fill="none"/>
<path d="M759.5 290.5L768.5 290.5" stroke="#8c2020" stroke-width="1" fill="none"/>
<path d="M759.5 310.5L768.5 310.5" stroke="#8c2020" stroke-width="1" fill="none"/>
<path d="M759.5 310.5L748.5 310.5L748.5 330.5" stroke="#2f962f" stroke-width="1" fill="none"/>
<path d="M738.5 330.5L758.5 330.5L748.5 337.5Z" stroke="#333" stroke-width="1" fill="none"/>
<rect x="768.5" y="280.5" width="40" height="40" rx="2" stroke="#333" stroke-width="1" fill="none"/>
<path d="M808.5 290.5L818.5 290.5" stroke="#8c2020" stroke-width="1" fill="none"/>
<path d="M818.5 290.5L828.5 290.5L828.5 265.5" stroke="#2f962f" stroke-width="1" fill="none"/>
<path d="M822.5 265.5L834.5 265.5" stroke="#333" stroke-width="1"/>
<text x="828.5" y="262.5" font-family='"Liberation Serif",serif' font-size="12" fill="#111" stroke="#111" stroke-width="0.2" text-anchor="middle" >VCC</text>
<path d="M808.5 300.5L818.5 300.5" stroke="#8c2020" stroke-width="1" fill="none"/>
<path d="M818.5 300.5L848.5 300.5" stroke="#2f962f" stroke-width="1" fill="none"/>
<path d="M848.5 300.5L848.5 290.5" stroke="#8c2020" stroke-width="1" fill="none"/>
<rect x="844.5" y="270.5" width="8" height="20" rx="0" stroke="#8c2020" stroke-width="1" fill="none"/>
<path d="M848.5 270.5L848.5 261.5" stroke="#8c2020" stroke-width="1" fill="none"/>
<path d="M848.5 261.5L858.5 261.5" stroke="#2f962f" stroke-width="1" fill="none"/>
<path d="M858.5 261.5L863.5 256.5L878.5 256.5L878.5 266.5L863.5 266.5Z" stroke="#3416b8" stroke-width="1" fill="none"/>
<text x="0" y="0" font-family='"Liberation Serif",serif' font-size="11.8" fill="#3416b8" stroke="#3416b8" stroke-width="0.12" text-anchor="start" letter-spacing="0.45" transform="translate(879.5 264.1) scale(0.88 1)">BOOT1</text>
<path d="M808.5 310.5L818.5 310.5" stroke="#8c2020" stroke-width="1" fill="none"/>
<path d="M818.5 310.5L828.5 310.5L828.5 330.5" stroke="#2f962f" stroke-width="1" fill="none"/>
<path d="M818.5 330.5L838.5 330.5L828.5 337.5Z" stroke="#333" stroke-width="1" fill="none"/>
<text x="770" y="274" font-family='"Liberation Sans",sans-serif' font-size="9" fill="#141460" stroke="#141460" stroke-width="0.15" text-anchor="start" >P1</text>
<text x="772" y="294" font-family='"Liberation Sans",sans-serif' font-size="10" fill="#2d1fa0" stroke="#2d1fa0" stroke-width="0.15" text-anchor="start" >1</text>
<text x="772" y="304" font-family='"Liberation Sans",sans-serif' font-size="10" fill="#2d1fa0" stroke="#2d1fa0" stroke-width="0.15" text-anchor="start" >3</text>
<text x="772" y="314" font-family='"Liberation Sans",sans-serif' font-size="10" fill="#2d1fa0" stroke="#2d1fa0" stroke-width="0.15" text-anchor="start" >5</text>
<text x="800" y="294" font-family='"Liberation Sans",sans-serif' font-size="10" fill="#2d1fa0" stroke="#2d1fa0" stroke-width="0.15" text-anchor="start" >2</text>
<text x="800" y="304" font-family='"Liberation Sans",sans-serif' font-size="10" fill="#2d1fa0" stroke="#2d1fa0" stroke-width="0.15" text-anchor="start" >4</text>
<text x="800" y="314" font-family='"Liberation Sans",sans-serif' font-size="10" fill="#2d1fa0" stroke="#2d1fa0" stroke-width="0.15" text-anchor="start" >6</text>
<text x="720" y="281" font-family='"Liberation Sans",sans-serif' font-size="9" fill="#141460" stroke="#141460" stroke-width="0.15" text-anchor="end" >R3</text>
<text x="720" y="291" font-family='"Liberation Sans",sans-serif' font-size="9" fill="#141460" stroke="#141460" stroke-width="0.15" text-anchor="end" >100K</text>
<text x="857" y="281" font-family='"Liberation Sans",sans-serif' font-size="9" fill="#141460" stroke="#141460" stroke-width="0.15" text-anchor="start" >R4</text>
<text x="857" y="291" font-family='"Liberation Sans",sans-serif' font-size="9" fill="#141460" stroke="#141460" stroke-width="0.15" text-anchor="start" >100K</text>
<path d="M992.5 255.5L1004.5 255.5" stroke="#333" stroke-width="1"/>
<text x="998.5" y="252.5" font-family='"Liberation Serif",serif' font-size="12" fill="#111" stroke="#111" stroke-width="0.2" text-anchor="middle" >VCC</text>
<path d="M998.5 255.5L998.5 265.5L1013.5 265.5" stroke="#2f962f" stroke-width="1" fill="none"/>
<path d="M1013.5 265.5L1028.5 265.5" stroke="#8c2020" stroke-width="1" fill="none"/>
<path d="M1028 258L1028 273L1038.5 265.5Z" fill="#8c1010"/>
<path d="M1038.5 257.5L1038.5 274.5" stroke="#8c2020" stroke-width="1" fill="none"/>
<path d="M1040 255L1046 249M1044 259L1050 253" stroke="#a02020" stroke-width="1"/>
<path d="M1047 248l-3 1l2 2zM1051 252l-3 1l2 2z" fill="#a02020" stroke="#a02020"/>
<path d="M1038.5 265.5L1053.5 265.5" stroke="#8c2020" stroke-width="1" fill="none"/>
<path d="M1053.5 265.5L1063.5 265.5" stroke="#333" stroke-width="1" fill="none"/>
<rect x="1063.5" y="261.5" width="20" height="8" rx="0" stroke="#8c2020" stroke-width="1" fill="none"/>
<path d="M1083.5 265.5L1093.5 265.5" stroke="#333" stroke-width="1" fill="none"/>
<path d="M1093.5 265.5L1103.5 265.5L1103.5 275.5" stroke="#2f962f" stroke-width="1" fill="none"/>
<path d="M1093.5 275.5L1113.5 275.5L1103.5 282.5Z" stroke="#333" stroke-width="1" fill="none"/>
<path d="M992.5 315.5L1004.5 315.5" stroke="#333" stroke-width="1"/>
<text x="998.5" y="312.5" font-family='"Liberation Serif",serif' font-size="12" fill="#111" stroke="#111" stroke-width="0.2" text-anchor="middle" >VCC</text>
<path d="M998.5 315.5L998.5 325.5L1013.5 325.5" stroke="#2f962f" stroke-width="1" fill="none"/>
<path d="M1013.5 325.5L1028.5 325.5" stroke="#8c2020" stroke-width="1" fill="none"/>
<path d="M1028 318L1028 333L1038.5 325.5Z" fill="#8c1010"/>
<path d="M1038.5 317.5L1038.5 334.5" stroke="#8c2020" stroke-width="1" fill="none"/>
<path d="M1040 315L1046 309M1044 319L1050 313" stroke="#a02020" stroke-width="1"/>
<path d="M1047 308l-3 1l2 2zM1051 312l-3 1l2 2z" fill="#a02020" stroke="#a02020"/>
<path d="M1038.5 325.5L1053.5 325.5" stroke="#8c2020" stroke-width="1" fill="none"/>
<path d="M1053.5 325.5L1063.5 325.5" stroke="#333" stroke-width="1" fill="none"/>
<rect x="1063.5" y="321.5" width="20" height="8" rx="0" stroke="#8c2020" stroke-width="1" fill="none"/>
<path d="M1083.5 325.5L1093.5 325.5" stroke="#333" stroke-width="1" fill="none"/>
<path d="M1093.5 325.5L1103.5 325.5" stroke="#2f962f" stroke-width="1" fill="none"/>
<path d="M1103.5 325.5L1108.5 320.5L1123.5 320.5L1123.5 330.5L1108.5 330.5Z" stroke="#3416b8" stroke-width="1" fill="none"/>
<text x="0" y="0" font-family='"Liberation Serif",serif' font-size="11.8" fill="#3416b8" stroke="#3416b8" stroke-width="0.12" text-anchor="start" letter-spacing="0.45" transform="translate(1124.5 328.1) scale(0.88 1)">PC13</text>
<text x="1025" y="245" font-family='"Liberation Sans",sans-serif' font-size="9" fill="#141460" stroke="#141460" stroke-width="0.15" text-anchor="start" >LED1</text>
<text x="1069" y="250" font-family='"Liberation Sans",sans-serif' font-size="9" fill="#141460" stroke="#141460" stroke-width="0.15" text-anchor="start" >R1</text>
<text x="1068" y="259" font-family='"Liberation Sans",sans-serif' font-size="9" fill="#141460" stroke="#141460" stroke-width="0.15" text-anchor="start" >510</text>
<text x="1025" y="305" font-family='"Liberation Sans",sans-serif' font-size="9" fill="#141460" stroke="#141460" stroke-width="0.15" text-anchor="start" >LED2</text>
<text x="1069" y="310" font-family='"Liberation Sans",sans-serif' font-size="9" fill="#141460" stroke="#141460" stroke-width="0.15" text-anchor="start" >R5</text>
<text x="1068" y="319" font-family='"Liberation Sans",sans-serif' font-size="9" fill="#141460" stroke="#141460" stroke-width="0.15" text-anchor="start" >510</text>
<rect x="543.5" y="460.5" width="140" height="249" rx="0" stroke="#8c2020" stroke-width="1" fill="none"/>
<text x="605" y="448" font-family='"Liberation Sans",sans-serif' font-size="9" fill="#141460" stroke="#141460" stroke-width="0.15" text-anchor="start" >U1.1</text>
<text x="605" y="457.5" font-family='"Liberation Sans",sans-serif' font-size="9" fill="#141460" stroke="#141460" stroke-width="0.15" text-anchor="start" letter-spacing="-0.1">STM32F103C8T6</text>
<path d="M514.5 470.5L509.5 465.5L493.5 465.5L493.5 475.5L509.5 475.5Z" stroke="#3416b8" stroke-width="1" fill="none"/>
<text x="0" y="0" font-family='"Liberation Serif",serif' font-size="11.8" fill="#3416b8" stroke="#3416b8" stroke-width="0.12" text-anchor="end" letter-spacing="0.45" transform="translate(492.0 475.8) scale(0.88 1)">PA0</text>
<path d="M514.5 470.5L524.5 470.5" stroke="#2f962f" stroke-width="1" fill="none"/>
<path d="M524.5 470.5L543.5 470.5" stroke="#8c2020" stroke-width="1" fill="none"/>
<text x="537.5" y="470" font-family='"Liberation Sans",sans-serif' font-size="9" fill="#2d1fa0" stroke="#2d1fa0" stroke-width="0.15" text-anchor="end" letter-spacing="0.8">10</text>
<text x="547.5" y="474" font-family='"Liberation Sans",sans-serif' font-size="10" fill="#2d1fa0" stroke="#2d1fa0" stroke-width="0.15" text-anchor="start" letter-spacing="0.8">PA0-WKUP</text>
<path d="M514.5 480.5L509.5 475.5L493.5 475.5L493.5 485.5L509.5 485.5Z" stroke="#3416b8" stroke-width="1" fill="none"/>
<text x="0" y="0" font-family='"Liberation Serif",serif' font-size="11.8" fill="#3416b8" stroke="#3416b8" stroke-width="0.12" text-anchor="end" letter-spacing="0.45" transform="translate(492.0 485.8) scale(0.88 1)">PA1</text>
<path d="M514.5 480.5L524.5 480.5" stroke="#2f962f" stroke-width="1" fill="none"/>
<path d="M524.5 480.5L543.5 480.5" stroke="#8c2020" stroke-width="1" fill="none"/>
<text x="537.5" y="480" font-family='"Liberation Sans",sans-serif' font-size="9" fill="#2d1fa0" stroke="#2d1fa0" stroke-width="0.15" text-anchor="end" letter-spacing="0.8">11</text>
<text x="547.5" y="484" font-family='"Liberation Sans",sans-serif' font-size="10" fill="#2d1fa0" stroke="#2d1fa0" stroke-width="0.15" text-anchor="start" letter-spacing="0.8">PA1</text>
<path d="M514.5 490.5L509.5 485.5L493.5 485.5L493.5 495.5L509.5 495.5Z" stroke="#3416b8" stroke-width="1" fill="none"/>
<text x="0" y="0" font-family='"Liberation Serif",serif' font-size="11.8" fill="#3416b8" stroke="#3416b8" stroke-width="0.12" text-anchor="end" letter-spacing="0.45" transform="translate(492.0 495.8) scale(0.88 1)">PA2</text>
<path d="M514.5 490.5L524.5 490.5" stroke="#2f962f" stroke-width="1" fill="none"/>
<path d="M524.5 490.5L543.5 490.5" stroke="#8c2020" stroke-width="1" fill="none"/>
<text x="537.5" y="490" font-family='"Liberation Sans",sans-serif' font-size="9" fill="#2d1fa0" stroke="#2d1fa0" stroke-width="0.15" text-anchor="end" letter-spacing="0.8">12</text>
<text x="547.5" y="494" font-family='"Liberation Sans",sans-serif' font-size="10" fill="#2d1fa0" stroke="#2d1fa0" stroke-width="0.15" text-anchor="start" letter-spacing="0.8">PA2</text>
<path d="M514.5 500.5L509.5 495.5L493.5 495.5L493.5 505.5L509.5 505.5Z" stroke="#3416b8" stroke-width="1" fill="none"/>
<text x="0" y="0" font-family='"Liberation Serif",serif' font-size="11.8" fill="#3416b8" stroke="#3416b8" stroke-width="0.12" text-anchor="end" letter-spacing="0.45" transform="translate(492.0 505.8) scale(0.88 1)">PA3</text>
<path d="M514.5 500.5L524.5 500.5" stroke="#2f962f" stroke-width="1" fill="none"/>
<path d="M524.5 500.5L543.5 500.5" stroke="#8c2020" stroke-width="1" fill="none"/>
<text x="537.5" y="500" font-family='"Liberation Sans",sans-serif' font-size="9" fill="#2d1fa0" stroke="#2d1fa0" stroke-width="0.15" text-anchor="end" letter-spacing="0.8">13</text>
<text x="547.5" y="504" font-family='"Liberation Sans",sans-serif' font-size="10" fill="#2d1fa0" stroke="#2d1fa0" stroke-width="0.15" text-anchor="start" letter-spacing="0.8">PA3</text>
<path d="M514.5 510.5L509.5 505.5L493.5 505.5L493.5 515.5L509.5 515.5Z" stroke="#3416b8" stroke-width="1" fill="none"/>
<text x="0" y="0" font-family='"Liberation Serif",serif' font-size="11.8" fill="#3416b8" stroke="#3416b8" stroke-width="0.12" text-anchor="end" letter-spacing="0.45" transform="translate(492.0 515.8) scale(0.88 1)">PA4</text>
<path d="M514.5 510.5L524.5 510.5" stroke="#2f962f" stroke-width="1" fill="none"/>
<path d="M524.5 510.5L543.5 510.5" stroke="#8c2020" stroke-width="1" fill="none"/>
<text x="537.5" y="510" font-family='"Liberation Sans",sans-serif' font-size="9" fill="#2d1fa0" stroke="#2d1fa0" stroke-width="0.15" text-anchor="end" letter-spacing="0.8">14</text>
<text x="547.5" y="514" font-family='"Liberation Sans",sans-serif' font-size="10" fill="#2d1fa0" stroke="#2d1fa0" stroke-width="0.15" text-anchor="start" letter-spacing="0.8">PA4</text>
<path d="M514.5 520.5L509.5 515.5L493.5 515.5L493.5 525.5L509.5 525.5Z" stroke="#3416b8" stroke-width="1" fill="none"/>
<text x="0" y="0" font-family='"Liberation Serif",serif' font-size="11.8" fill="#3416b8" stroke="#3416b8" stroke-width="0.12" text-anchor="end" letter-spacing="0.45" transform="translate(492.0 525.8) scale(0.88 1)">PA5</text>
<path d="M514.5 520.5L524.5 520.5" stroke="#2f962f" stroke-width="1" fill="none"/>
<path d="M524.5 520.5L543.5 520.5" stroke="#8c2020" stroke-width="1" fill="none"/>
<text x="537.5" y="520" font-family='"Liberation Sans",sans-serif' font-size="9" fill="#2d1fa0" stroke="#2d1fa0" stroke-width="0.15" text-anchor="end" letter-spacing="0.8">15</text>
<text x="547.5" y="524" font-family='"Liberation Sans",sans-serif' font-size="10" fill="#2d1fa0" stroke="#2d1fa0" stroke-width="0.15" text-anchor="start" letter-spacing="0.8">PA5</text>
<path d="M514.5 530.5L509.5 525.5L493.5 525.5L493.5 535.5L509.5 535.5Z" stroke="#3416b8" stroke-width="1" fill="none"/>
<text x="0" y="0" font-family='"Liberation Serif",serif' font-size="11.8" fill="#3416b8" stroke="#3416b8" stroke-width="0.12" text-anchor="end" letter-spacing="0.45" transform="translate(492.0 535.8) scale(0.88 1)">PA6</text>
<path d="M514.5 530.5L524.5 530.5" stroke="#2f962f" stroke-width="1" fill="none"/>
<path d="M524.5 530.5L543.5 530.5" stroke="#8c2020" stroke-width="1" fill="none"/>
<text x="537.5" y="530" font-family='"Liberation Sans",sans-serif' font-size="9" fill="#2d1fa0" stroke="#2d1fa0" stroke-width="0.15" text-anchor="end" letter-spacing="0.8">16</text>
<text x="547.5" y="534" font-family='"Liberation Sans",sans-serif' font-size="10" fill="#2d1fa0" stroke="#2d1fa0" stroke-width="0.15" text-anchor="start" letter-spacing="0.8">PA6</text>
<path d="M514.5 540.5L509.5 535.5L493.5 535.5L493.5 545.5L509.5 545.5Z" stroke="#3416b8" stroke-width="1" fill="none"/>
<text x="0" y="0" font-family='"Liberation Serif",serif' font-size="11.8" fill="#3416b8" stroke="#3416b8" stroke-width="0.12" text-anchor="end" letter-spacing="0.45" transform="translate(492.0 545.8) scale(0.88 1)">PA7</text>
<path d="M514.5 540.5L524.5 540.5" stroke="#2f962f" stroke-width="1" fill="none"/>
<path d="M524.5 540.5L543.5 540.5" stroke="#8c2020" stroke-width="1" fill="none"/>
<text x="537.5" y="540" font-family='"Liberation Sans",sans-serif' font-size="9" fill="#2d1fa0" stroke="#2d1fa0" stroke-width="0.15" text-anchor="end" letter-spacing="0.8">17</text>
<text x="547.5" y="544" font-family='"Liberation Sans",sans-serif' font-size="10" fill="#2d1fa0" stroke="#2d1fa0" stroke-width="0.15" text-anchor="start" letter-spacing="0.8">PA7</text>
<path d="M514.5 560.5L509.5 555.5L493.5 555.5L493.5 565.5L509.5 565.5Z" stroke="#3416b8" stroke-width="1" fill="none"/>
<text x="0" y="0" font-family='"Liberation Serif",serif' font-size="11.8" fill="#3416b8" stroke="#3416b8" stroke-width="0.12" text-anchor="end" letter-spacing="0.45" transform="translate(492.0 565.8) scale(0.88 1)">PA8</text>
<path d="M514.5 560.5L524.5 560.5" stroke="#2f962f" stroke-width="1" fill="none"/>
<path d="M524.5 560.5L543.5 560.5" stroke="#8c2020" stroke-width="1" fill="none"/>
<text x="537.5" y="560" font-family='"Liberation Sans",sans-serif' font-size="9" fill="#2d1fa0" stroke="#2d1fa0" stroke-width="0.15" text-anchor="end" letter-spacing="0.8">29</text>
<text x="547.5" y="564" font-family='"Liberation Sans",sans-serif' font-size="10" fill="#2d1fa0" stroke="#2d1fa0" stroke-width="0.15" text-anchor="start" letter-spacing="0.8">PA8</text>
<path d="M514.5 570.5L509.5 565.5L493.5 565.5L493.5 575.5L509.5 575.5Z" stroke="#3416b8" stroke-width="1" fill="none"/>
<text x="0" y="0" font-family='"Liberation Serif",serif' font-size="11.8" fill="#3416b8" stroke="#3416b8" stroke-width="0.12" text-anchor="end" letter-spacing="0.45" transform="translate(492.0 575.8) scale(0.88 1)">PA9</text>
<path d="M514.5 570.5L524.5 570.5" stroke="#2f962f" stroke-width="1" fill="none"/>
<path d="M524.5 570.5L543.5 570.5" stroke="#8c2020" stroke-width="1" fill="none"/>
<text x="537.5" y="570" font-family='"Liberation Sans",sans-serif' font-size="9" fill="#2d1fa0" stroke="#2d1fa0" stroke-width="0.15" text-anchor="end" letter-spacing="0.8">30</text>
<text x="547.5" y="574" font-family='"Liberation Sans",sans-serif' font-size="10" fill="#2d1fa0" stroke="#2d1fa0" stroke-width="0.15" text-anchor="start" letter-spacing="0.8">PA9</text>
<path d="M514.5 580.5L509.5 575.5L493.5 575.5L493.5 585.5L509.5 585.5Z" stroke="#3416b8" stroke-width="1" fill="none"/>
<text x="0" y="0" font-family='"Liberation Serif",serif' font-size="11.8" fill="#3416b8" stroke="#3416b8" stroke-width="0.12" text-anchor="end" letter-spacing="0.45" transform="translate(492.0 585.8) scale(0.88 1)">PA10</text>
<path d="M514.5 580.5L524.5 580.5" stroke="#2f962f" stroke-width="1" fill="none"/>
<path d="M524.5 580.5L543.5 580.5" stroke="#8c2020" stroke-width="1" fill="none"/>
<text x="537.5" y="580" font-family='"Liberation Sans",sans-serif' font-size="9" fill="#2d1fa0" stroke="#2d1fa0" stroke-width="0.15" text-anchor="end" letter-spacing="0.8">31</text>
<text x="547.5" y="584" font-family='"Liberation Sans",sans-serif' font-size="10" fill="#2d1fa0" stroke="#2d1fa0" stroke-width="0.15" text-anchor="start" letter-spacing="0.8">PA10</text>
<path d="M514.5 590.5L509.5 585.5L493.5 585.5L493.5 595.5L509.5 595.5Z" stroke="#3416b8" stroke-width="1" fill="none"/>
<text x="0" y="0" font-family='"Liberation Serif",serif' font-size="11.8" fill="#3416b8" stroke="#3416b8" stroke-width="0.12" text-anchor="end" letter-spacing="0.45" transform="translate(492.0 595.8) scale(0.88 1)">PA11</text>
<path d="M514.5 590.5L524.5 590.5" stroke="#2f962f" stroke-width="1" fill="none"/>
<path d="M524.5 590.5L543.5 590.5" stroke="#8c2020" stroke-width="1" fill="none"/>
<text x="537.5" y="590" font-family='"Liberation Sans",sans-serif' font-size="9" fill="#2d1fa0" stroke="#2d1fa0" stroke-width="0.15" text-anchor="end" letter-spacing="0.8">32</text>
<text x="547.5" y="594" font-family='"Liberation Sans",sans-serif' font-size="10" fill="#2d1fa0" stroke="#2d1fa0" stroke-width="0.15" text-anchor="start" letter-spacing="0.8">PA11</text>
<path d="M514.5 600.5L509.5 595.5L493.5 595.5L493.5 605.5L509.5 605.5Z" stroke="#3416b8" stroke-width="1" fill="none"/>
<text x="0" y="0" font-family='"Liberation Serif",serif' font-size="11.8" fill="#3416b8" stroke="#3416b8" stroke-width="0.12" text-anchor="end" letter-spacing="0.45" transform="translate(492.0 605.8) scale(0.88 1)">PA12</text>
<path d="M514.5 600.5L524.5 600.5" stroke="#2f962f" stroke-width="1" fill="none"/>
<path d="M524.5 600.5L543.5 600.5" stroke="#8c2020" stroke-width="1" fill="none"/>
<text x="537.5" y="600" font-family='"Liberation Sans",sans-serif' font-size="9" fill="#2d1fa0" stroke="#2d1fa0" stroke-width="0.15" text-anchor="end" letter-spacing="0.8">33</text>
<text x="547.5" y="604" font-family='"Liberation Sans",sans-serif' font-size="10" fill="#2d1fa0" stroke="#2d1fa0" stroke-width="0.15" text-anchor="start" letter-spacing="0.8">PA12</text>
<path d="M514.5 610.5L509.5 605.5L493.5 605.5L493.5 615.5L509.5 615.5Z" stroke="#3416b8" stroke-width="1" fill="none"/>
<text x="0" y="0" font-family='"Liberation Serif",serif' font-size="11.8" fill="#3416b8" stroke="#3416b8" stroke-width="0.12" text-anchor="end" letter-spacing="0.45" transform="translate(492.0 615.8) scale(0.88 1)">SWDIO</text>
<path d="M514.5 610.5L524.5 610.5" stroke="#2f962f" stroke-width="1" fill="none"/>
<path d="M524.5 610.5L543.5 610.5" stroke="#8c2020" stroke-width="1" fill="none"/>
<text x="537.5" y="610" font-family='"Liberation Sans",sans-serif' font-size="9" fill="#2d1fa0" stroke="#2d1fa0" stroke-width="0.15" text-anchor="end" letter-spacing="0.8">34</text>
<text x="547.5" y="614" font-family='"Liberation Sans",sans-serif' font-size="10" fill="#2d1fa0" stroke="#2d1fa0" stroke-width="0.15" text-anchor="start" letter-spacing="0.8">PA13</text>
<path d="M514.5 620.5L509.5 615.5L493.5 615.5L493.5 625.5L509.5 625.5Z" stroke="#3416b8" stroke-width="1" fill="none"/>
<text x="0" y="0" font-family='"Liberation Serif",serif' font-size="11.8" fill="#3416b8" stroke="#3416b8" stroke-width="0.12" text-anchor="end" letter-spacing="0.45" transform="translate(492.0 625.8) scale(0.88 1)">SWCLK</text>
<path d="M514.5 620.5L524.5 620.5" stroke="#2f962f" stroke-width="1" fill="none"/>
<path d="M524.5 620.5L543.5 620.5" stroke="#8c2020" stroke-width="1" fill="none"/>
<text x="537.5" y="620" font-family='"Liberation Sans",sans-serif' font-size="9" fill="#2d1fa0" stroke="#2d1fa0" stroke-width="0.15" text-anchor="end" letter-spacing="0.8">37</text>
<text x="547.5" y="624" font-family='"Liberation Sans",sans-serif' font-size="10" fill="#2d1fa0" stroke="#2d1fa0" stroke-width="0.15" text-anchor="start" letter-spacing="0.8">PA14</text>
<path d="M514.5 630.5L509.5 625.5L493.5 625.5L493.5 635.5L509.5 635.5Z" stroke="#3416b8" stroke-width="1" fill="none"/>
<text x="0" y="0" font-family='"Liberation Serif",serif' font-size="11.8" fill="#3416b8" stroke="#3416b8" stroke-width="0.12" text-anchor="end" letter-spacing="0.45" transform="translate(492.0 635.8) scale(0.88 1)">PA15</text>
<path d="M514.5 630.5L524.5 630.5" stroke="#2f962f" stroke-width="1" fill="none"/>
<path d="M524.5 630.5L543.5 630.5" stroke="#8c2020" stroke-width="1" fill="none"/>
<text x="537.5" y="630" font-family='"Liberation Sans",sans-serif' font-size="9" fill="#2d1fa0" stroke="#2d1fa0" stroke-width="0.15" text-anchor="end" letter-spacing="0.8">38</text>
<text x="547.5" y="634" font-family='"Liberation Sans",sans-serif' font-size="10" fill="#2d1fa0" stroke="#2d1fa0" stroke-width="0.15" text-anchor="start" letter-spacing="0.8">PA15</text>
<path d="M514.5 650.5L509.5 645.5L493.5 645.5L493.5 655.5L509.5 655.5Z" stroke="#3416b8" stroke-width="1" fill="none"/>
<text x="0" y="0" font-family='"Liberation Serif",serif' font-size="11.8" fill="#3416b8" stroke="#3416b8" stroke-width="0.12" text-anchor="end" letter-spacing="0.45" transform="translate(492.0 655.8) scale(0.88 1)">PC13</text>
<path d="M514.5 650.5L524.5 650.5" stroke="#2f962f" stroke-width="1" fill="none"/>
<path d="M524.5 650.5L543.5 650.5" stroke="#8c2020" stroke-width="1" fill="none"/>
<text x="537.5" y="650" font-family='"Liberation Sans",sans-serif' font-size="9" fill="#2d1fa0" stroke="#2d1fa0" stroke-width="0.15" text-anchor="end" letter-spacing="0.8">2</text>
<text x="547.5" y="654" font-family='"Liberation Sans",sans-serif' font-size="10" fill="#2d1fa0" stroke="#2d1fa0" stroke-width="0.15" text-anchor="start" letter-spacing="0.8">PC13-TAMPER-RTC</text>
<path d="M514.5 660.5L509.5 655.5L493.5 655.5L493.5 665.5L509.5 665.5Z" stroke="#3416b8" stroke-width="1" fill="none"/>
<text x="0" y="0" font-family='"Liberation Serif",serif' font-size="11.8" fill="#3416b8" stroke="#3416b8" stroke-width="0.12" text-anchor="end" letter-spacing="0.45" transform="translate(492.0 665.8) scale(0.88 1)">PC14</text>
<path d="M514.5 660.5L524.5 660.5" stroke="#2f962f" stroke-width="1" fill="none"/>
<path d="M524.5 660.5L543.5 660.5" stroke="#8c2020" stroke-width="1" fill="none"/>
<text x="537.5" y="660" font-family='"Liberation Sans",sans-serif' font-size="9" fill="#2d1fa0" stroke="#2d1fa0" stroke-width="0.15" text-anchor="end" letter-spacing="0.8">3</text>
<text x="547.5" y="664" font-family='"Liberation Sans",sans-serif' font-size="10" fill="#2d1fa0" stroke="#2d1fa0" stroke-width="0.15" text-anchor="start" letter-spacing="0.8">PC14-OSC32_IN</text>
<path d="M514.5 670.5L509.5 665.5L493.5 665.5L493.5 675.5L509.5 675.5Z" stroke="#3416b8" stroke-width="1" fill="none"/>
<text x="0" y="0" font-family='"Liberation Serif",serif' font-size="11.8" fill="#3416b8" stroke="#3416b8" stroke-width="0.12" text-anchor="end" letter-spacing="0.45" transform="translate(492.0 675.8) scale(0.88 1)">PC15</text>
<path d="M514.5 670.5L524.5 670.5" stroke="#2f962f" stroke-width="1" fill="none"/>
<path d="M524.5 670.5L543.5 670.5" stroke="#8c2020" stroke-width="1" fill="none"/>
<text x="537.5" y="670" font-family='"Liberation Sans",sans-serif' font-size="9" fill="#2d1fa0" stroke="#2d1fa0" stroke-width="0.15" text-anchor="end" letter-spacing="0.8">4</text>
<text x="547.5" y="674" font-family='"Liberation Sans",sans-serif' font-size="10" fill="#2d1fa0" stroke="#2d1fa0" stroke-width="0.15" text-anchor="start" letter-spacing="0.8">PC15-OSC32_OUT</text>
<path d="M514.5 690.5L509.5 685.5L493.5 685.5L493.5 695.5L509.5 695.5Z" stroke="#3416b8" stroke-width="1" fill="none"/>
<text x="0" y="0" font-family='"Liberation Serif",serif' font-size="11.8" fill="#3416b8" stroke="#3416b8" stroke-width="0.12" text-anchor="end" letter-spacing="0.45" transform="translate(492.0 695.8) scale(0.88 1)">OSCIN</text>
<path d="M514.5 690.5L524.5 690.5" stroke="#2f962f" stroke-width="1" fill="none"/>
<path d="M524.5 690.5L543.5 690.5" stroke="#8c2020" stroke-width="1" fill="none"/>
<text x="537.5" y="690" font-family='"Liberation Sans",sans-serif' font-size="9" fill="#2d1fa0" stroke="#2d1fa0" stroke-width="0.15" text-anchor="end" letter-spacing="0.8">5</text>
<text x="547.5" y="694" font-family='"Liberation Sans",sans-serif' font-size="10" fill="#2d1fa0" stroke="#2d1fa0" stroke-width="0.15" text-anchor="start" letter-spacing="0.8">PD0-OSC_IN</text>
<path d="M514.5 700.5L509.5 695.5L493.5 695.5L493.5 705.5L509.5 705.5Z" stroke="#3416b8" stroke-width="1" fill="none"/>
<text x="0" y="0" font-family='"Liberation Serif",serif' font-size="11.8" fill="#3416b8" stroke="#3416b8" stroke-width="0.12" text-anchor="end" letter-spacing="0.45" transform="translate(492.0 705.8) scale(0.88 1)">OSCOUT</text>
<path d="M514.5 700.5L524.5 700.5" stroke="#2f962f" stroke-width="1" fill="none"/>
<path d="M524.5 700.5L543.5 700.5" stroke="#8c2020" stroke-width="1" fill="none"/>
<text x="537.5" y="700" font-family='"Liberation Sans",sans-serif' font-size="9" fill="#2d1fa0" stroke="#2d1fa0" stroke-width="0.15" text-anchor="end" letter-spacing="0.8">6</text>
<text x="547.5" y="704" font-family='"Liberation Sans",sans-serif' font-size="10" fill="#2d1fa0" stroke="#2d1fa0" stroke-width="0.15" text-anchor="start" letter-spacing="0.8">PD1-OSC_OUT</text>
<path d="M714.5 470.5L719.5 465.5L734.5 465.5L734.5 475.5L719.5 475.5Z" stroke="#3416b8" stroke-width="1" fill="none"/>
<text x="0" y="0" font-family='"Liberation Serif",serif' font-size="11.8" fill="#3416b8" stroke="#3416b8" stroke-width="0.12" text-anchor="start" letter-spacing="0.45" transform="translate(735.5 473.1) scale(0.88 1)">PB0</text>
<path d="M704.5 470.5L714.5 470.5" stroke="#2f962f" stroke-width="1" fill="none"/>
<path d="M683.5 470.5L704.5 470.5" stroke="#8c2020" stroke-width="1" fill="none"/>
<text x="690" y="470" font-family='"Liberation Sans",sans-serif' font-size="9" fill="#2d1fa0" stroke="#2d1fa0" stroke-width="0.15" text-anchor="start" letter-spacing="0.8">18</text>
<text x="680.5" y="474" font-family='"Liberation Sans",sans-serif' font-size="10" fill="#2d1fa0" stroke="#2d1fa0" stroke-width="0.15" text-anchor="end" letter-spacing="0.8">PB0</text>
<path d="M714.5 480.5L719.5 475.5L734.5 475.5L734.5 485.5L719.5 485.5Z" stroke="#3416b8" stroke-width="1" fill="none"/>
<text x="0" y="0" font-family='"Liberation Serif",serif' font-size="11.8" fill="#3416b8" stroke="#3416b8" stroke-width="0.12" text-anchor="start" letter-spacing="0.45" transform="translate(735.5 483.1) scale(0.88 1)">PB1</text>
<path d="M704.5 480.5L714.5 480.5" stroke="#2f962f" stroke-width="1" fill="none"/>
<path d="M683.5 480.5L704.5 480.5" stroke="#8c2020" stroke-width="1" fill="none"/>
<text x="690" y="480" font-family='"Liberation Sans",sans-serif' font-size="9" fill="#2d1fa0" stroke="#2d1fa0" stroke-width="0.15" text-anchor="start" letter-spacing="0.8">19</text>
<text x="680.5" y="484" font-family='"Liberation Sans",sans-serif' font-size="10" fill="#2d1fa0" stroke="#2d1fa0" stroke-width="0.15" text-anchor="end" letter-spacing="0.8">PB1</text>
<path d="M714.5 490.5L719.5 485.5L734.5 485.5L734.5 495.5L719.5 495.5Z" stroke="#3416b8" stroke-width="1" fill="none"/>
<text x="0" y="0" font-family='"Liberation Serif",serif' font-size="11.8" fill="#3416b8" stroke="#3416b8" stroke-width="0.12" text-anchor="start" letter-spacing="0.45" transform="translate(735.5 493.1) scale(0.88 1)">BOOT1</text>
<path d="M704.5 490.5L714.5 490.5" stroke="#2f962f" stroke-width="1" fill="none"/>
<path d="M683.5 490.5L704.5 490.5" stroke="#8c2020" stroke-width="1" fill="none"/>
<text x="690" y="490" font-family='"Liberation Sans",sans-serif' font-size="9" fill="#2d1fa0" stroke="#2d1fa0" stroke-width="0.15" text-anchor="start" letter-spacing="0.8">20</text>
<text x="680.5" y="494" font-family='"Liberation Sans",sans-serif' font-size="10" fill="#2d1fa0" stroke="#2d1fa0" stroke-width="0.15" text-anchor="end" letter-spacing="0.8">PB2</text>
<path d="M714.5 500.5L719.5 495.5L734.5 495.5L734.5 505.5L719.5 505.5Z" stroke="#3416b8" stroke-width="1" fill="none"/>
<text x="0" y="0" font-family='"Liberation Serif",serif' font-size="11.8" fill="#3416b8" stroke="#3416b8" stroke-width="0.12" text-anchor="start" letter-spacing="0.45" transform="translate(735.5 503.1) scale(0.88 1)">PB3</text>
<path d="M704.5 500.5L714.5 500.5" stroke="#2f962f" stroke-width="1" fill="none"/>
<path d="M683.5 500.5L704.5 500.5" stroke="#8c2020" stroke-width="1" fill="none"/>
<text x="690" y="500" font-family='"Liberation Sans",sans-serif' font-size="9" fill="#2d1fa0" stroke="#2d1fa0" stroke-width="0.15" text-anchor="start" letter-spacing="0.8">39</text>
<text x="680.5" y="504" font-family='"Liberation Sans",sans-serif' font-size="10" fill="#2d1fa0" stroke="#2d1fa0" stroke-width="0.15" text-anchor="end" letter-spacing="0.8">PB3</text>
<path d="M714.5 510.5L719.5 505.5L734.5 505.5L734.5 515.5L719.5 515.5Z" stroke="#3416b8" stroke-width="1" fill="none"/>
<text x="0" y="0" font-family='"Liberation Serif",serif' font-size="11.8" fill="#3416b8" stroke="#3416b8" stroke-width="0.12" text-anchor="start" letter-spacing="0.45" transform="translate(735.5 513.1) scale(0.88 1)">PB4</text>
<path d="M704.5 510.5L714.5 510.5" stroke="#2f962f" stroke-width="1" fill="none"/>
<path d="M683.5 510.5L704.5 510.5" stroke="#8c2020" stroke-width="1" fill="none"/>
<text x="690" y="510" font-family='"Liberation Sans",sans-serif' font-size="9" fill="#2d1fa0" stroke="#2d1fa0" stroke-width="0.15" text-anchor="start" letter-spacing="0.8">40</text>
<text x="680.5" y="514" font-family='"Liberation Sans",sans-serif' font-size="10" fill="#2d1fa0" stroke="#2d1fa0" stroke-width="0.15" text-anchor="end" letter-spacing="0.8">PB4</text>
<path d="M714.5 520.5L719.5 515.5L734.5 515.5L734.5 525.5L719.5 525.5Z" stroke="#3416b8" stroke-width="1" fill="none"/>
<text x="0" y="0" font-family='"Liberation Serif",serif' font-size="11.8" fill="#3416b8" stroke="#3416b8" stroke-width="0.12" text-anchor="start" letter-spacing="0.45" transform="translate(735.5 523.1) scale(0.88 1)">PB5</text>
<path d="M704.5 520.5L714.5 520.5" stroke="#2f962f" stroke-width="1" fill="none"/>
<path d="M683.5 520.5L704.5 520.5" stroke="#8c2020" stroke-width="1" fill="none"/>
<text x="690" y="520" font-family='"Liberation Sans",sans-serif' font-size="9" fill="#2d1fa0" stroke="#2d1fa0" stroke-width="0.15" text-anchor="start" letter-spacing="0.8">41</text>
<text x="680.5" y="524" font-family='"Liberation Sans",sans-serif' font-size="10" fill="#2d1fa0" stroke="#2d1fa0" stroke-width="0.15" text-anchor="end" letter-spacing="0.8">PB5</text>
<path d="M714.5 530.5L719.5 525.5L734.5 525.5L734.5 535.5L719.5 535.5Z" stroke="#3416b8" stroke-width="1" fill="none"/>
<text x="0" y="0" font-family='"Liberation Serif",serif' font-size="11.8" fill="#3416b8" stroke="#3416b8" stroke-width="0.12" text-anchor="start" letter-spacing="0.45" transform="translate(735.5 533.1) scale(0.88 1)">PB6</text>
<path d="M704.5 530.5L714.5 530.5" stroke="#2f962f" stroke-width="1" fill="none"/>
<path d="M683.5 530.5L704.5 530.5" stroke="#8c2020" stroke-width="1" fill="none"/>
<text x="690" y="530" font-family='"Liberation Sans",sans-serif' font-size="9" fill="#2d1fa0" stroke="#2d1fa0" stroke-width="0.15" text-anchor="start" letter-spacing="0.8">42</text>
<text x="680.5" y="534" font-family='"Liberation Sans",sans-serif' font-size="10" fill="#2d1fa0" stroke="#2d1fa0" stroke-width="0.15" text-anchor="end" letter-spacing="0.8">PB6</text>
<path d="M714.5 540.5L719.5 535.5L734.5 535.5L734.5 545.5L719.5 545.5Z" stroke="#3416b8" stroke-width="1" fill="none"/>
<text x="0" y="0" font-family='"Liberation Serif",serif' font-size="11.8" fill="#3416b8" stroke="#3416b8" stroke-width="0.12" text-anchor="start" letter-spacing="0.45" transform="translate(735.5 543.1) scale(0.88 1)">PB7</text>
<path d="M704.5 540.5L714.5 540.5" stroke="#2f962f" stroke-width="1" fill="none"/>
<path d="M683.5 540.5L704.5 540.5" stroke="#8c2020" stroke-width="1" fill="none"/>
<text x="690" y="540" font-family='"Liberation Sans",sans-serif' font-size="9" fill="#2d1fa0" stroke="#2d1fa0" stroke-width="0.15" text-anchor="start" letter-spacing="0.8">43</text>
<text x="680.5" y="544" font-family='"Liberation Sans",sans-serif' font-size="10" fill="#2d1fa0" stroke="#2d1fa0" stroke-width="0.15" text-anchor="end" letter-spacing="0.8">PB7</text>
<path d="M714.5 560.5L719.5 555.5L734.5 555.5L734.5 565.5L719.5 565.5Z" stroke="#3416b8" stroke-width="1" fill="none"/>
<text x="0" y="0" font-family='"Liberation Serif",serif' font-size="11.8" fill="#3416b8" stroke="#3416b8" stroke-width="0.12" text-anchor="start" letter-spacing="0.45" transform="translate(735.5 563.1) scale(0.88 1)">PB8</text>
<path d="M704.5 560.5L714.5 560.5" stroke="#2f962f" stroke-width="1" fill="none"/>
<path d="M683.5 560.5L704.5 560.5" stroke="#8c2020" stroke-width="1" fill="none"/>
<text x="690" y="560" font-family='"Liberation Sans",sans-serif' font-size="9" fill="#2d1fa0" stroke="#2d1fa0" stroke-width="0.15" text-anchor="start" letter-spacing="0.8">45</text>
<text x="680.5" y="564" font-family='"Liberation Sans",sans-serif' font-size="10" fill="#2d1fa0" stroke="#2d1fa0" stroke-width="0.15" text-anchor="end" letter-spacing="0.8">PB8</text>
<path d="M714.5 570.5L719.5 565.5L734.5 565.5L734.5 575.5L719.5 575.5Z" stroke="#3416b8" stroke-width="1" fill="none"/>
<text x="0" y="0" font-family='"Liberation Serif",serif' font-size="11.8" fill="#3416b8" stroke="#3416b8" stroke-width="0.12" text-anchor="start" letter-spacing="0.45" transform="translate(735.5 573.1) scale(0.88 1)">PB9</text>
<path d="M704.5 570.5L714.5 570.5" stroke="#2f962f" stroke-width="1" fill="none"/>
<path d="M683.5 570.5L704.5 570.5" stroke="#8c2020" stroke-width="1" fill="none"/>
<text x="690" y="570" font-family='"Liberation Sans",sans-serif' font-size="9" fill="#2d1fa0" stroke="#2d1fa0" stroke-width="0.15" text-anchor="start" letter-spacing="0.8">46</text>
<text x="680.5" y="574" font-family='"Liberation Sans",sans-serif' font-size="10" fill="#2d1fa0" stroke="#2d1fa0" stroke-width="0.15" text-anchor="end" letter-spacing="0.8">PB9</text>
<path d="M714.5 580.5L719.5 575.5L734.5 575.5L734.5 585.5L719.5 585.5Z" stroke="#3416b8" stroke-width="1" fill="none"/>
<text x="0" y="0" font-family='"Liberation Serif",serif' font-size="11.8" fill="#3416b8" stroke="#3416b8" stroke-width="0.12" text-anchor="start" letter-spacing="0.45" transform="translate(735.5 583.1) scale(0.88 1)">PB10</text>
<path d="M704.5 580.5L714.5 580.5" stroke="#2f962f" stroke-width="1" fill="none"/>
<path d="M683.5 580.5L704.5 580.5" stroke="#8c2020" stroke-width="1" fill="none"/>
<text x="690" y="580" font-family='"Liberation Sans",sans-serif' font-size="9" fill="#2d1fa0" stroke="#2d1fa0" stroke-width="0.15" text-anchor="start" letter-spacing="0.8">21</text>
<text x="680.5" y="584" font-family='"Liberation Sans",sans-serif' font-size="10" fill="#2d1fa0" stroke="#2d1fa0" stroke-width="0.15" text-anchor="end" letter-spacing="0.8">PB10</text>
<path d="M714.5 590.5L719.5 585.5L734.5 585.5L734.5 595.5L719.5 595.5Z" stroke="#3416b8" stroke-width="1" fill="none"/>
<text x="0" y="0" font-family='"Liberation Serif",serif' font-size="11.8" fill="#3416b8" stroke="#3416b8" stroke-width="0.12" text-anchor="start" letter-spacing="0.45" transform="translate(735.5 593.1) scale(0.88 1)">PB11</text>
<path d="M704.5 590.5L714.5 590.5" stroke="#2f962f" stroke-width="1" fill="none"/>
<path d="M683.5 590.5L704.5 590.5" stroke="#8c2020" stroke-width="1" fill="none"/>
<text x="690" y="590" font-family='"Liberation Sans",sans-serif' font-size="9" fill="#2d1fa0" stroke="#2d1fa0" stroke-width="0.15" text-anchor="start" letter-spacing="0.8">22</text>
<text x="680.5" y="594" font-family='"Liberation Sans",sans-serif' font-size="10" fill="#2d1fa0" stroke="#2d1fa0" stroke-width="0.15" text-anchor="end" letter-spacing="0.8">PB11</text>
<path d="M714.5 600.5L719.5 595.5L734.5 595.5L734.5 605.5L719.5 605.5Z" stroke="#3416b8" stroke-width="1" fill="none"/>
<text x="0" y="0" font-family='"Liberation Serif",serif' font-size="11.8" fill="#3416b8" stroke="#3416b8" stroke-width="0.12" text-anchor="start" letter-spacing="0.45" transform="translate(735.5 603.1) scale(0.88 1)">PB12</text>
<path d="M704.5 600.5L714.5 600.5" stroke="#2f962f" stroke-width="1" fill="none"/>
<path d="M683.5 600.5L704.5 600.5" stroke="#8c2020" stroke-width="1" fill="none"/>
<text x="690" y="600" font-family='"Liberation Sans",sans-serif' font-size="9" fill="#2d1fa0" stroke="#2d1fa0" stroke-width="0.15" text-anchor="start" letter-spacing="0.8">25</text>
<text x="680.5" y="604" font-family='"Liberation Sans",sans-serif' font-size="10" fill="#2d1fa0" stroke="#2d1fa0" stroke-width="0.15" text-anchor="end" letter-spacing="0.8">PB12</text>
<path d="M714.5 610.5L719.5 605.5L734.5 605.5L734.5 615.5L719.5 615.5Z" stroke="#3416b8" stroke-width="1" fill="none"/>
<text x="0" y="0" font-family='"Liberation Serif",serif' font-size="11.8" fill="#3416b8" stroke="#3416b8" stroke-width="0.12" text-anchor="start" letter-spacing="0.45" transform="translate(735.5 613.1) scale(0.88 1)">PB13</text>
<path d="M704.5 610.5L714.5 610.5" stroke="#2f962f" stroke-width="1" fill="none"/>
<path d="M683.5 610.5L704.5 610.5" stroke="#8c2020" stroke-width="1" fill="none"/>
<text x="690" y="610" font-family='"Liberation Sans",sans-serif' font-size="9" fill="#2d1fa0" stroke="#2d1fa0" stroke-width="0.15" text-anchor="start" letter-spacing="0.8">26</text>
<text x="680.5" y="614" font-family='"Liberation Sans",sans-serif' font-size="10" fill="#2d1fa0" stroke="#2d1fa0" stroke-width="0.15" text-anchor="end" letter-spacing="0.8">PB13</text>
<path d="M714.5 620.5L719.5 615.5L734.5 615.5L734.5 625.5L719.5 625.5Z" stroke="#3416b8" stroke-width="1" fill="none"/>
<text x="0" y="0" font-family='"Liberation Serif",serif' font-size="11.8" fill="#3416b8" stroke="#3416b8" stroke-width="0.12" text-anchor="start" letter-spacing="0.45" transform="translate(735.5 623.1) scale(0.88 1)">PB14</text>
<path d="M704.5 620.5L714.5 620.5" stroke="#2f962f" stroke-width="1" fill="none"/>
<path d="M683.5 620.5L704.5 620.5" stroke="#8c2020" stroke-width="1" fill="none"/>
<text x="690" y="620" font-family='"Liberation Sans",sans-serif' font-size="9" fill="#2d1fa0" stroke="#2d1fa0" stroke-width="0.15" text-anchor="start" letter-spacing="0.8">27</text>
<text x="680.5" y="624" font-family='"Liberation Sans",sans-serif' font-size="10" fill="#2d1fa0" stroke="#2d1fa0" stroke-width="0.15" text-anchor="end" letter-spacing="0.8">PB14</text>
<path d="M714.5 630.5L719.5 625.5L734.5 625.5L734.5 635.5L719.5 635.5Z" stroke="#3416b8" stroke-width="1" fill="none"/>
<text x="0" y="0" font-family='"Liberation Serif",serif' font-size="11.8" fill="#3416b8" stroke="#3416b8" stroke-width="0.12" text-anchor="start" letter-spacing="0.45" transform="translate(735.5 633.1) scale(0.88 1)">PB15</text>
<path d="M704.5 630.5L714.5 630.5" stroke="#2f962f" stroke-width="1" fill="none"/>
<path d="M683.5 630.5L704.5 630.5" stroke="#8c2020" stroke-width="1" fill="none"/>
<text x="690" y="630" font-family='"Liberation Sans",sans-serif' font-size="9" fill="#2d1fa0" stroke="#2d1fa0" stroke-width="0.15" text-anchor="start" letter-spacing="0.8">28</text>
<text x="680.5" y="634" font-family='"Liberation Sans",sans-serif' font-size="10" fill="#2d1fa0" stroke="#2d1fa0" stroke-width="0.15" text-anchor="end" letter-spacing="0.8">PB15</text>
<path d="M714.5 650.5L719.5 645.5L734.5 645.5L734.5 655.5L719.5 655.5Z" stroke="#3416b8" stroke-width="1" fill="none"/>
<text x="0" y="0" font-family='"Liberation Serif",serif' font-size="11.8" fill="#3416b8" stroke="#3416b8" stroke-width="0.12" text-anchor="start" letter-spacing="0.45" transform="translate(735.5 653.1) scale(0.88 1)">BOOT0</text>
<path d="M704.5 650.5L714.5 650.5" stroke="#2f962f" stroke-width="1" fill="none"/>
<path d="M683.5 650.5L704.5 650.5" stroke="#8c2020" stroke-width="1" fill="none"/>
<text x="690" y="650" font-family='"Liberation Sans",sans-serif' font-size="9" fill="#2d1fa0" stroke="#2d1fa0" stroke-width="0.15" text-anchor="start" letter-spacing="0.8">44</text>
<text x="680.5" y="654" font-family='"Liberation Sans",sans-serif' font-size="10" fill="#2d1fa0" stroke="#2d1fa0" stroke-width="0.15" text-anchor="end" letter-spacing="0.8">BOOT0</text>
<path d="M714.5 670.5L719.5 665.5L734.5 665.5L734.5 675.5L719.5 675.5Z" stroke="#3416b8" stroke-width="1" fill="none"/>
<text x="0" y="0" font-family='"Liberation Serif",serif' font-size="11.8" fill="#3416b8" stroke="#3416b8" stroke-width="0.12" text-anchor="start" letter-spacing="0.45" transform="translate(735.5 673.1) scale(0.88 1)">RESET</text>
<path d="M704.5 670.5L714.5 670.5" stroke="#2f962f" stroke-width="1" fill="none"/>
<path d="M683.5 670.5L704.5 670.5" stroke="#8c2020" stroke-width="1" fill="none"/>
<text x="690" y="670" font-family='"Liberation Sans",sans-serif' font-size="9" fill="#2d1fa0" stroke="#2d1fa0" stroke-width="0.15" text-anchor="start" letter-spacing="0.8">7</text>
<text x="680.5" y="674" font-family='"Liberation Sans",sans-serif' font-size="10" fill="#2d1fa0" stroke="#2d1fa0" stroke-width="0.15" text-anchor="end" letter-spacing="0.8">NRST</text>
<rect x="898.5" y="451.5" width="80" height="79" rx="0" stroke="#8c2020" stroke-width="1" fill="none"/>
<text x="930" y="439" font-family='"Liberation Sans",sans-serif' font-size="9" fill="#141460" stroke="#141460" stroke-width="0.15" text-anchor="start" >U1.2</text>
<text x="930" y="448" font-family='"Liberation Sans",sans-serif' font-size="9" fill="#141460" stroke="#141460" stroke-width="0.15" text-anchor="start" letter-spacing="-0.1">STM32F103C8T6</text>
<path d="M869.5 460.5L864.5 455.5L848.5 455.5L848.5 465.5L864.5 465.5Z" stroke="#3416b8" stroke-width="1" fill="none"/>
<text x="0" y="0" font-family='"Liberation Serif",serif' font-size="11.8" fill="#3416b8" stroke="#3416b8" stroke-width="0.12" text-anchor="end" letter-spacing="0.45" transform="translate(847.0 465.8) scale(0.88 1)">VBAT</text>
<path d="M869.5 460.5L878.5 460.5" stroke="#2f962f" stroke-width="1" fill="none"/>
<path d="M878.5 460.5L898.5 460.5" stroke="#8c2020" stroke-width="1" fill="none"/>
<text x="890" y="459" font-family='"Liberation Sans",sans-serif' font-size="9" fill="#2d1fa0" stroke="#2d1fa0" stroke-width="0.15" text-anchor="middle" letter-spacing="0.8">1</text>
<text x="903" y="464" font-family='"Liberation Sans",sans-serif' font-size="10" fill="#2d1fa0" stroke="#2d1fa0" stroke-width="0.15" text-anchor="start" letter-spacing="0.8">VBAT</text>
<path d="M878.5 480.5L898.5 480.5" stroke="#8c2020" stroke-width="1" fill="none"/>
<text x="894" y="480" font-family='"Liberation Sans",sans-serif' font-size="9" fill="#c23a2a" stroke="#c23a2a" stroke-width="0.15" text-anchor="end" letter-spacing="0.8">24</text>
<text x="903" y="484" font-family='"Liberation Sans",sans-serif' font-size="10" fill="#c23a2a" stroke="#c23a2a" stroke-width="0.15" text-anchor="start" letter-spacing="0.8">VDD_1</text>
<path d="M878.5 490.5L898.5 490.5" stroke="#8c2020" stroke-width="1" fill="none"/>
<text x="894" y="490" font-family='"Liberation Sans",sans-serif' font-size="9" fill="#c23a2a" stroke="#c23a2a" stroke-width="0.15" text-anchor="end" letter-spacing="0.8">36</text>
<text x="903" y="494" font-family='"Liberation Sans",sans-serif' font-size="10" fill="#c23a2a" stroke="#c23a2a" stroke-width="0.15" text-anchor="start" letter-spacing="0.8">VDD_2</text>
<path d="M878.5 500.5L898.5 500.5" stroke="#8c2020" stroke-width="1" fill="none"/>
<text x="894" y="500" font-family='"Liberation Sans",sans-serif' font-size="9" fill="#c23a2a" stroke="#c23a2a" stroke-width="0.15" text-anchor="end" letter-spacing="0.8">48</text>
<text x="903" y="504" font-family='"Liberation Sans",sans-serif' font-size="10" fill="#c23a2a" stroke="#c23a2a" stroke-width="0.15" text-anchor="start" letter-spacing="0.8">VDD_3</text>
<path d="M869.5 520.5L864.5 515.5L848.5 515.5L848.5 525.5L864.5 525.5Z" stroke="#3416b8" stroke-width="1" fill="none"/>
<text x="0" y="0" font-family='"Liberation Serif",serif' font-size="11.8" fill="#3416b8" stroke="#3416b8" stroke-width="0.12" text-anchor="end" letter-spacing="0.45" transform="translate(847.0 525.8) scale(0.88 1)">VCC</text>
<path d="M869.5 520.5L878.5 520.5" stroke="#2f962f" stroke-width="1" fill="none"/>
<path d="M878.5 520.5L898.5 520.5" stroke="#8c2020" stroke-width="1" fill="none"/>
<text x="893" y="520" font-family='"Liberation Sans",sans-serif' font-size="9" fill="#c23a2a" stroke="#c23a2a" stroke-width="0.15" text-anchor="end" letter-spacing="0.8">9</text>
<text x="903" y="524" font-family='"Liberation Sans",sans-serif' font-size="10" fill="#c23a2a" stroke="#c23a2a" stroke-width="0.15" text-anchor="start" letter-spacing="0.8">VDDA</text>
<path d="M878.5 480.5L878.5 520.5" stroke="#2f962f" stroke-width="1" fill="none"/>
<circle cx="878.5" cy="490.5" r="2.6" fill="#cc1a1a"/>
<circle cx="878.5" cy="500.5" r="2.6" fill="#cc1a1a"/>
<circle cx="878.5" cy="520.5" r="2.6" fill="#cc1a1a"/>
<path d="M978.5 480.5L999.5 480.5" stroke="#222" stroke-width="1" fill="none"/>
<text x="983" y="480" font-family='"Liberation Sans",sans-serif' font-size="9" fill="#222" stroke="#222" stroke-width="0.15" text-anchor="start" letter-spacing="0.8">23</text>
<text x="975.5" y="484" font-family='"Liberation Sans",sans-serif' font-size="10" fill="#222" stroke="#222" stroke-width="0.15" text-anchor="end" letter-spacing="0.8">VSS_1</text>
<path d="M978.5 490.5L999.5 490.5" stroke="#222" stroke-width="1" fill="none"/>
<text x="983" y="490" font-family='"Liberation Sans",sans-serif' font-size="9" fill="#222" stroke="#222" stroke-width="0.15" text-anchor="start" letter-spacing="0.8">35</text>
<text x="975.5" y="494" font-family='"Liberation Sans",sans-serif' font-size="10" fill="#222" stroke="#222" stroke-width="0.15" text-anchor="end" letter-spacing="0.8">VSS_2</text>
<path d="M978.5 500.5L999.5 500.5" stroke="#222" stroke-width="1" fill="none"/>
<text x="983" y="500" font-family='"Liberation Sans",sans-serif' font-size="9" fill="#222" stroke="#222" stroke-width="0.15" text-anchor="start" letter-spacing="0.8">47</text>
<text x="975.5" y="504" font-family='"Liberation Sans",sans-serif' font-size="10" fill="#222" stroke="#222" stroke-width="0.15" text-anchor="end" letter-spacing="0.8">VSS_3</text>
<path d="M978.5 520.5L999.5 520.5" stroke="#222" stroke-width="1" fill="none"/>
<text x="989" y="520" font-family='"Liberation Sans",sans-serif' font-size="9" fill="#222" stroke="#222" stroke-width="0.15" text-anchor="start" letter-spacing="0.8">8</text>
<text x="975.5" y="524" font-family='"Liberation Sans",sans-serif' font-size="10" fill="#222" stroke="#222" stroke-width="0.15" text-anchor="end" letter-spacing="0.8">VSSA</text>
<path d="M999.5 480.5L999.5 520.5" stroke="#2f962f" stroke-width="1" fill="none"/>
<path d="M999.5 520.5L1009.5 520.5" stroke="#2f962f" stroke-width="1" fill="none"/>
<circle cx="999.5" cy="490.5" r="2.6" fill="#cc1a1a"/>
<circle cx="999.5" cy="500.5" r="2.6" fill="#cc1a1a"/>
<circle cx="999.5" cy="520.5" r="2.6" fill="#cc1a1a"/>
<path d="M1009.5 520.5L1014.5 515.5L1029.5 515.5L1029.5 525.5L1014.5 525.5Z" stroke="#3416b8" stroke-width="1" fill="none"/>
<text x="0" y="0" font-family='"Liberation Serif",serif' font-size="11.8" fill="#3416b8" stroke="#3416b8" stroke-width="0.12" text-anchor="start" letter-spacing="0.45" transform="translate(1030.5 523.1) scale(0.88 1)">GND</text>
<path d="M852.5 565.5L864.5 565.5" stroke="#333" stroke-width="1"/>
<text x="858.5" y="562.5" font-family='"Liberation Serif",serif' font-size="12" fill="#111" stroke="#111" stroke-width="0.2" text-anchor="middle" >VCC</text>
<path d="M858.5 565.5L858.5 575.5" stroke="#333" stroke-width="1" fill="none"/>
<path d="M858.5 575.5L858.5 593.5" stroke="#8c2020" stroke-width="1" fill="none"/>
<path d="M850.5 593.5L866.5 593.5" stroke="#8c2020" stroke-width="1" fill="none"/>
<path d="M850.5 597.5L866.5 597.5" stroke="#8c2020" stroke-width="1" fill="none"/>
<path d="M858.5 597.5L858.5 615.5" stroke="#8c2020" stroke-width="1" fill="none"/>
<path d="M858.5 615.5L858.5 625.5" stroke="#333" stroke-width="1" fill="none"/>
<path d="M848.5 625.5L868.5 625.5L858.5 632.5Z" stroke="#333" stroke-width="1" fill="none"/>
<text x="869" y="599" font-family='"Liberation Sans",sans-serif' font-size="9" fill="#141460" stroke="#141460" stroke-width="0.15" text-anchor="start" >C10</text>
<text x="869" y="608" font-family='"Liberation Sans",sans-serif' font-size="9" fill="#141460" stroke="#141460" stroke-width="0.15" text-anchor="start" >100nF</text>
<path d="M902.5 565.5L914.5 565.5" stroke="#333" stroke-width="1"/>
<text x="908.5" y="562.5" font-family='"Liberation Serif",serif' font-size="12" fill="#111" stroke="#111" stroke-width="0.2" text-anchor="middle" >VCC</text>
<path d="M908.5 565.5L908.5 575.5" stroke="#333" stroke-width="1" fill="none"/>
<path d="M908.5 575.5L908.5 593.5" stroke="#8c2020" stroke-width="1" fill="none"/>
<path d="M900.5 593.5L916.5 593.5" stroke="#8c2020" stroke-width="1" fill="none"/>
<path d="M900.5 597.5L916.5 597.5" stroke="#8c2020" stroke-width="1" fill="none"/>
<path d="M908.5 597.5L908.5 615.5" stroke="#8c2020" stroke-width="1" fill="none"/>
<path d="M908.5 615.5L908.5 625.5" stroke="#333" stroke-width="1" fill="none"/>
<path d="M898.5 625.5L918.5 625.5L908.5 632.5Z" stroke="#333" stroke-width="1" fill="none"/>
<text x="919" y="599" font-family='"Liberation Sans",sans-serif' font-size="9" fill="#141460" stroke="#141460" stroke-width="0.15" text-anchor="start" >C11</text>
<text x="919" y="608" font-family='"Liberation Sans",sans-serif' font-size="9" fill="#141460" stroke="#141460" stroke-width="0.15" text-anchor="start" >100nF</text>
<path d="M952.5 565.5L964.5 565.5" stroke="#333" stroke-width="1"/>
<text x="958.5" y="562.5" font-family='"Liberation Serif",serif' font-size="12" fill="#111" stroke="#111" stroke-width="0.2" text-anchor="middle" >VCC</text>
<path d="M958.5 565.5L958.5 575.5" stroke="#333" stroke-width="1" fill="none"/>
<path d="M958.5 575.5L958.5 593.5" stroke="#8c2020" stroke-width="1" fill="none"/>
<path d="M950.5 593.5L966.5 593.5" stroke="#8c2020" stroke-width="1" fill="none"/>
<path d="M950.5 597.5L966.5 597.5" stroke="#8c2020" stroke-width="1" fill="none"/>
<path d="M958.5 597.5L958.5 615.5" stroke="#8c2020" stroke-width="1" fill="none"/>
<path d="M958.5 615.5L958.5 625.5" stroke="#333" stroke-width="1" fill="none"/>
<path d="M948.5 625.5L968.5 625.5L958.5 632.5Z" stroke="#333" stroke-width="1" fill="none"/>
<text x="969" y="599" font-family='"Liberation Sans",sans-serif' font-size="9" fill="#141460" stroke="#141460" stroke-width="0.15" text-anchor="start" >C3</text>
<text x="969" y="608" font-family='"Liberation Sans",sans-serif' font-size="9" fill="#141460" stroke="#141460" stroke-width="0.15" text-anchor="start" >100nF</text>
<path d="M1002.5 565.5L1014.5 565.5" stroke="#333" stroke-width="1"/>
<text x="1008.5" y="562.5" font-family='"Liberation Serif",serif' font-size="12" fill="#111" stroke="#111" stroke-width="0.2" text-anchor="middle" >VCC</text>
<path d="M1008.5 565.5L1008.5 575.5" stroke="#333" stroke-width="1" fill="none"/>
<path d="M1008.5 575.5L1008.5 593.5" stroke="#8c2020" stroke-width="1" fill="none"/>
<path d="M1000.5 593.5L1016.5 593.5" stroke="#8c2020" stroke-width="1" fill="none"/>
<path d="M1000.5 597.5L1016.5 597.5" stroke="#8c2020" stroke-width="1" fill="none"/>
<path d="M1008.5 597.5L1008.5 615.5" stroke="#8c2020" stroke-width="1" fill="none"/>
<path d="M1008.5 615.5L1008.5 625.5" stroke="#333" stroke-width="1" fill="none"/>
<path d="M998.5 625.5L1018.5 625.5L1008.5 632.5Z" stroke="#333" stroke-width="1" fill="none"/>
<text x="1019" y="599" font-family='"Liberation Sans",sans-serif' font-size="9" fill="#141460" stroke="#141460" stroke-width="0.15" text-anchor="start" >C4</text>
<text x="1019" y="608" font-family='"Liberation Sans",sans-serif' font-size="9" fill="#141460" stroke="#141460" stroke-width="0.15" text-anchor="start" >100nF</text>
<path d="M1052.5 565.5L1064.5 565.5" stroke="#333" stroke-width="1"/>
<text x="1058.5" y="562.5" font-family='"Liberation Serif",serif' font-size="12" fill="#111" stroke="#111" stroke-width="0.2" text-anchor="middle" >VCC</text>
<path d="M1058.5 565.5L1058.5 575.5" stroke="#333" stroke-width="1" fill="none"/>
<path d="M1058.5 575.5L1058.5 593.5" stroke="#8c2020" stroke-width="1" fill="none"/>
<path d="M1050.5 593.5L1066.5 593.5" stroke="#8c2020" stroke-width="1" fill="none"/>
<path d="M1050.5 597.5L1066.5 597.5" stroke="#8c2020" stroke-width="1" fill="none"/>
<path d="M1058.5 597.5L1058.5 615.5" stroke="#8c2020" stroke-width="1" fill="none"/>
<path d="M1058.5 615.5L1058.5 625.5" stroke="#333" stroke-width="1" fill="none"/>
<path d="M1048.5 625.5L1068.5 625.5L1058.5 632.5Z" stroke="#333" stroke-width="1" fill="none"/>
<text x="1069" y="599" font-family='"Liberation Sans",sans-serif' font-size="9" fill="#141460" stroke="#141460" stroke-width="0.15" text-anchor="start" >C1</text>
<text x="1069" y="608" font-family='"Liberation Sans",sans-serif' font-size="9" fill="#141460" stroke="#141460" stroke-width="0.15" text-anchor="start" >100nF</text>
<path d="M808.5 735.5L808.5 695.5" stroke="#2f962f" stroke-width="1" fill="none"/>
<path d="M808.5 695.5L827.5 695.5" stroke="#8c2020" stroke-width="1" fill="none"/>
<path d="M827.5 687.5L827.5 703.5" stroke="#8c2020" stroke-width="1" fill="none"/>
<path d="M831.5 687.5L831.5 703.5" stroke="#8c2020" stroke-width="1" fill="none"/>
<path d="M831.5 695.5L848.5 695.5" stroke="#8c2020" stroke-width="1" fill="none"/>
<path d="M848.5 695.5L904.5 695.5" stroke="#2f962f" stroke-width="1" fill="none"/>
<path d="M904.5 695.5L909.5 690.5L924.5 690.5L924.5 700.5L909.5 700.5Z" stroke="#3416b8" stroke-width="1" fill="none"/>
<text x="0" y="0" font-family='"Liberation Serif",serif' font-size="11.8" fill="#3416b8" stroke="#3416b8" stroke-width="0.12" text-anchor="start" letter-spacing="0.45" transform="translate(925.5 698.1) scale(0.88 1)">OSCIN</text>
<path d="M788.5 745.5L788.5 735.5L808.5 735.5" stroke="#2f962f" stroke-width="1" fill="none"/>
<path d="M808.5 735.5L827.5 735.5" stroke="#8c2020" stroke-width="1" fill="none"/>
<path d="M827.5 727.5L827.5 743.5" stroke="#8c2020" stroke-width="1" fill="none"/>
<path d="M831.5 727.5L831.5 743.5" stroke="#8c2020" stroke-width="1" fill="none"/>
<path d="M831.5 735.5L848.5 735.5" stroke="#8c2020" stroke-width="1" fill="none"/>
<path d="M848.5 735.5L904.5 735.5" stroke="#2f962f" stroke-width="1" fill="none"/>
<path d="M904.5 735.5L909.5 730.5L924.5 730.5L924.5 740.5L909.5 740.5Z" stroke="#3416b8" stroke-width="1" fill="none"/>
<text x="0" y="0" font-family='"Liberation Serif",serif' font-size="11.8" fill="#3416b8" stroke="#3416b8" stroke-width="0.12" text-anchor="start" letter-spacing="0.45" transform="translate(925.5 738.1) scale(0.88 1)">OSCOUT</text>
<path d="M778.5 745.5L798.5 745.5L788.5 752.5Z" stroke="#333" stroke-width="1" fill="none"/>
<path d="M848.5 695.5L848.5 710.5" stroke="#222" stroke-width="1" fill="none"/>
<path d="M841.5 710.5L856.5 710.5" stroke="#8c2020" stroke-width="1" fill="none"/>
<rect x="842.5" y="712.5" width="13" height="6" rx="0" stroke="#8c2020" stroke-width="1" fill="none"/>
<path d="M841.5 720.5L856.5 720.5" stroke="#8c2020" stroke-width="1" fill="none"/>
<path d="M848.5 720.5L848.5 735.5" stroke="#222" stroke-width="1" fill="none"/>
<path d="M893.5 695.5L893.5 705.5" stroke="#8c2020" stroke-width="1" fill="none"/>
<rect x="889.5" y="705.5" width="8" height="20" rx="0" stroke="#8c2020" stroke-width="1" fill="none"/>
<path d="M893.5 725.5L893.5 735.5" stroke="#8c2020" stroke-width="1" fill="none"/>
<circle cx="808.5" cy="735.5" r="2.6" fill="#cc1a1a"/>
<circle cx="848.5" cy="695.5" r="2.6" fill="#cc1a1a"/>
<circle cx="848.5" cy="735.5" r="2.6" fill="#cc1a1a"/>
<circle cx="893.5" cy="695.5" r="2.6" fill="#cc1a1a"/>
<circle cx="893.5" cy="735.5" r="2.6" fill="#cc1a1a"/>
<text x="810" y="687" font-family='"Liberation Sans",sans-serif' font-size="9" fill="#141460" stroke="#141460" stroke-width="0.15" text-anchor="start" >C13</text>
<text x="834" y="687" font-family='"Liberation Sans",sans-serif' font-size="9" fill="#141460" stroke="#141460" stroke-width="0.15" text-anchor="start" >20pF</text>
<text x="810" y="752" font-family='"Liberation Sans",sans-serif' font-size="9" fill="#141460" stroke="#141460" stroke-width="0.15" text-anchor="start" >C14</text>
<text x="834" y="752" font-family='"Liberation Sans",sans-serif' font-size="9" fill="#141460" stroke="#141460" stroke-width="0.15" text-anchor="start" >20pF</text>
<text x="857" y="719" font-family='"Liberation Sans",sans-serif' font-size="9" fill="#141460" stroke="#141460" stroke-width="0.15" text-anchor="start" >X1</text>
<text x="857" y="728" font-family='"Liberation Sans",sans-serif' font-size="9" fill="#141460" stroke="#141460" stroke-width="0.15" text-anchor="start" >8MHz</text>
<text x="899" y="719" font-family='"Liberation Sans",sans-serif' font-size="9" fill="#141460" stroke="#141460" stroke-width="0.15" text-anchor="start" >R6</text>
<text x="899" y="728" font-family='"Liberation Sans",sans-serif' font-size="9" fill="#141460" stroke="#141460" stroke-width="0.15" text-anchor="start" >1M</text>
<path d="M1048.5 690.5L1048.5 675.5L1063.5 675.5" stroke="#2f962f" stroke-width="1" fill="none"/>
<path d="M1063.5 675.5L1068.5 670.5L1083.5 670.5L1083.5 680.5L1068.5 680.5Z" stroke="#3416b8" stroke-width="1" fill="none"/>
<text x="0" y="0" font-family='"Liberation Serif",serif' font-size="11.8" fill="#3416b8" stroke="#3416b8" stroke-width="0.12" text-anchor="start" letter-spacing="0.45" transform="translate(1084.5 678.1) scale(0.88 1)">PC14</text>
<path d="M1008.5 750.5L1008.5 690.5" stroke="#2f962f" stroke-width="1" fill="none"/>
<path d="M1008.5 690.5L1025.5 690.5" stroke="#8c2020" stroke-width="1" fill="none"/>
<path d="M1025.5 682.5L1025.5 698.5" stroke="#8c2020" stroke-width="1" fill="none"/>
<path d="M1029.5 682.5L1029.5 698.5" stroke="#8c2020" stroke-width="1" fill="none"/>
<path d="M1029.5 690.5L1048.5 690.5" stroke="#8c2020" stroke-width="1" fill="none"/>
<path d="M993.5 777.5L993.5 750.5L1008.5 750.5" stroke="#2f962f" stroke-width="1" fill="none"/>
<path d="M1008.5 750.5L1025.5 750.5" stroke="#8c2020" stroke-width="1" fill="none"/>
<path d="M1025.5 742.5L1025.5 758.5" stroke="#8c2020" stroke-width="1" fill="none"/>
<path d="M1029.5 742.5L1029.5 758.5" stroke="#8c2020" stroke-width="1" fill="none"/>
<path d="M1029.5 750.5L1048.5 750.5" stroke="#8c2020" stroke-width="1" fill="none"/>
<path d="M983.5 777.5L1003.5 777.5L993.5 784.5Z" stroke="#333" stroke-width="1" fill="none"/>
<path d="M1048.5 690.5L1048.5 710.5" stroke="#8c2020" stroke-width="1" fill="none"/>
<path d="M1048.5 730.5L1048.5 750.5" stroke="#8c2020" stroke-width="1" fill="none"/>
<rect x="1038.5" y="710.5" width="40" height="20" rx="0" stroke="#222" stroke-width="1" fill="none"/>
<path d="M1048.5 710.5L1048.5 715.5" stroke="#222" stroke-width="1" fill="none"/>
<path d="M1043.5 715.5L1055.5 715.5" stroke="#222" stroke-width="1" fill="none"/>
<rect x="1043.5" y="718.5" width="11" height="5" rx="0" stroke="#222" stroke-width="1" fill="none"/>
<path d="M1043.5 726.5L1055.5 726.5" stroke="#222" stroke-width="1" fill="none"/>
<path d="M1048.5 726.5L1048.5 730.5" stroke="#222" stroke-width="1" fill="none"/>
<path d="M1068.5 691.5L1068.5 710.5" stroke="#8c2020" stroke-width="1" fill="none"/>
<path d="M1068.5 730.5L1068.5 750.5" stroke="#8c2020" stroke-width="1" fill="none"/>
<path d="M1048.5 750.5L1048.5 765.5L1063.5 765.5" stroke="#2f962f" stroke-width="1" fill="none"/>
<path d="M1063.5 765.5L1068.5 760.5L1083.5 760.5L1083.5 770.5L1068.5 770.5Z" stroke="#3416b8" stroke-width="1" fill="none"/>
<text x="0" y="0" font-family='"Liberation Serif",serif' font-size="11.8" fill="#3416b8" stroke="#3416b8" stroke-width="0.12" text-anchor="start" letter-spacing="0.45" transform="translate(1084.5 768.1) scale(0.88 1)">PC15</text>
<circle cx="1008.5" cy="750.5" r="2.6" fill="#cc1a1a"/>
<circle cx="1048.5" cy="690.5" r="2.6" fill="#cc1a1a"/>
<circle cx="1048.5" cy="750.5" r="2.6" fill="#cc1a1a"/>
<text x="1021" y="683" font-family='"Liberation Sans",sans-serif' font-size="9" fill="#141460" stroke="#141460" stroke-width="0.15" text-anchor="start" >C9</text>
<text x="1013" y="712" font-family='"Liberation Sans",sans-serif' font-size="9" fill="#141460" stroke="#141460" stroke-width="0.15" text-anchor="start" >20pF</text>
<text x="1015" y="741" font-family='"Liberation Sans",sans-serif' font-size="9" fill="#141460" stroke="#141460" stroke-width="0.15" text-anchor="start" >C12</text>
<text x="1013" y="771" font-family='"Liberation Sans",sans-serif' font-size="9" fill="#141460" stroke="#141460" stroke-width="0.15" text-anchor="start" >20pF</text>
<text x="1083" y="719" font-family='"Liberation Sans",sans-serif' font-size="9" fill="#141460" stroke="#141460" stroke-width="0.15" text-anchor="start" >X2</text>
<text x="1083" y="729" font-family='"Liberation Sans",sans-serif' font-size="9" fill="#141460" stroke="#141460" stroke-width="0.15" text-anchor="start" >32.768KHz</text>
<text x="1048" y="706.5" font-family='"Liberation Sans",sans-serif' font-size="10" fill="#2d1fa0" stroke="#2d1fa0" stroke-width="0.15" text-anchor="middle" transform="rotate(-90 1048 702.5)">1</text>
<text x="1068" y="706" font-family='"Liberation Sans",sans-serif' font-size="10" fill="#2d1fa0" stroke="#2d1fa0" stroke-width="0.15" text-anchor="middle" transform="rotate(-90 1068 702)">2</text>
<text x="1048" y="743" font-family='"Liberation Sans",sans-serif' font-size="10" fill="#2d1fa0" stroke="#2d1fa0" stroke-width="0.15" text-anchor="middle" transform="rotate(-90 1048 739)">4</text>
<text x="1068" y="743" font-family='"Liberation Sans",sans-serif' font-size="10" fill="#2d1fa0" stroke="#2d1fa0" stroke-width="0.15" text-anchor="middle" transform="rotate(-90 1068 739)">3</text>
<rect x="488.5" y="855.5" width="40" height="60" rx="3" stroke="#8c2020" stroke-width="1" fill="none"/>
<text x="503" y="844" font-family='"Liberation Sans",sans-serif' font-size="9" fill="#141460" stroke="#141460" stroke-width="0.15" text-anchor="start" >U3</text>
<path d="M528.5 865.5L539.5 865.5" stroke="#8c2020" stroke-width="1" fill="none"/>
<text x="524.5" y="869" font-family='"Liberation Sans",sans-serif' font-size="10" fill="#c23a2a" stroke="#c23a2a" stroke-width="0.15" text-anchor="end" letter-spacing="0.8">VCC</text>
<text x="530.5" y="865" font-family='"Liberation Sans",sans-serif' font-size="10" fill="#c23a2a" stroke="#c23a2a" stroke-width="0.15" text-anchor="start" >1</text>
<path d="M528.5 875.5L539.5 875.5" stroke="#8c2020" stroke-width="1" fill="none"/>
<text x="524.5" y="879" font-family='"Liberation Sans",sans-serif' font-size="10" fill="#222" stroke="#222" stroke-width="0.15" text-anchor="end" letter-spacing="0.8">D-</text>
<text x="530.5" y="875" font-family='"Liberation Sans",sans-serif' font-size="10" fill="#222" stroke="#222" stroke-width="0.15" text-anchor="start" >2</text>
<path d="M528.5 885.5L539.5 885.5" stroke="#8c2020" stroke-width="1" fill="none"/>
<text x="524.5" y="889" font-family='"Liberation Sans",sans-serif' font-size="10" fill="#222" stroke="#222" stroke-width="0.15" text-anchor="end" letter-spacing="0.8">D+</text>
<text x="530.5" y="885" font-family='"Liberation Sans",sans-serif' font-size="10" fill="#222" stroke="#222" stroke-width="0.15" text-anchor="start" >3</text>
<path d="M528.5 895.5L539.5 895.5" stroke="#8c2020" stroke-width="1" fill="none"/>
<text x="524.5" y="899" font-family='"Liberation Sans",sans-serif' font-size="10" fill="#222" stroke="#222" stroke-width="0.15" text-anchor="end" letter-spacing="0.8">ID</text>
<text x="530.5" y="895" font-family='"Liberation Sans",sans-serif' font-size="10" fill="#222" stroke="#222" stroke-width="0.15" text-anchor="start" >4</text>
<path d="M528.5 905.5L539.5 905.5" stroke="#8c2020" stroke-width="1" fill="none"/>
<text x="524.5" y="909" font-family='"Liberation Sans",sans-serif' font-size="10" fill="#222" stroke="#222" stroke-width="0.15" text-anchor="end" letter-spacing="0.8">GND</text>
<text x="530.5" y="905" font-family='"Liberation Sans",sans-serif' font-size="10" fill="#222" stroke="#222" stroke-width="0.15" text-anchor="start" >5</text>
<path d="M539.5 865.5L563.5 865.5L563.5 845.5" stroke="#2f962f" stroke-width="1" fill="none"/>
<path d="M563.5 845.5L578.5 845.5" stroke="#8c2020" stroke-width="1" fill="none"/>
<path d="M578.5 839.5L578.5 851.5L589.5 845.5Z" stroke="#8c2020" fill="none"/>
<path d="M589.5 839.5L589.5 851.5" stroke="#8c2020" stroke-width="1" fill="none"/>
<path d="M589.5 845.5L600.5 845.5" stroke="#8c2020" stroke-width="1" fill="none"/>
<path d="M600.5 845.5L638.5 845.5" stroke="#2f962f" stroke-width="1" fill="none"/>
<circle cx="623.5" cy="845.5" r="2.6" fill="#cc1a1a"/>
<path d="M638.5 845.5L643.5 840.5L658.5 840.5L658.5 850.5L643.5 850.5Z" stroke="#3416b8" stroke-width="1" fill="none"/>
<text x="0" y="0" font-family='"Liberation Serif",serif' font-size="11.8" fill="#3416b8" stroke="#3416b8" stroke-width="0.12" text-anchor="start" letter-spacing="0.45" transform="translate(659.5 848.1) scale(0.88 1)">USB 5V</text>
<path d="M623.5 825.5L617.5 818.5L617.5 805.5L628.5 805.5L628.5 818.5Z" stroke="#3416b8" fill="none"/>
<path d="M623.5 826.5L623.5 845.5" stroke="#2f962f" stroke-width="1" fill="none"/>
<text x="626" y="803" font-family='"Liberation Serif",serif' font-size="12" fill="#3416b8" stroke="#3416b8" stroke-width="0.12" text-anchor="start" transform="rotate(-90 626 803)">MOSFET</text>
<text x="579" y="828" font-family='"Liberation Sans",sans-serif' font-size="9" fill="#141460" stroke="#141460" stroke-width="0.15" text-anchor="start" >D1</text>
<text x="579" y="838" font-family='"Liberation Sans",sans-serif' font-size="9" fill="#141460" stroke="#141460" stroke-width="0.15" text-anchor="start" >SS110-A</text>
<path d="M539.5 875.5L583.5 875.5" stroke="#2f962f" stroke-width="1" fill="none"/>
<rect x="583.5" y="871.5" width="21" height="8" rx="0" stroke="#8c2020" stroke-width="1" fill="none"/>
<path d="M604.5 875.5L634.5 875.5" stroke="#2f962f" stroke-width="1" fill="none"/>
<path d="M634.5 875.5L639.5 870.5L654.5 870.5L654.5 880.5L639.5 880.5Z" stroke="#3416b8" stroke-width="1" fill="none"/>
<text x="0" y="0" font-family='"Liberation Serif",serif' font-size="11.8" fill="#3416b8" stroke="#3416b8" stroke-width="0.12" text-anchor="start" letter-spacing="0.45" transform="translate(655.5 878.1) scale(0.88 1)">PA11</text>
<path d="M539.5 885.5L583.5 885.5" stroke="#2f962f" stroke-width="1" fill="none"/>
<rect x="583.5" y="881.5" width="21" height="8" rx="0" stroke="#8c2020" stroke-width="1" fill="none"/>
<path d="M604.5 885.5L634.5 885.5" stroke="#2f962f" stroke-width="1" fill="none"/>
<path d="M634.5 885.5L639.5 880.5L654.5 880.5L654.5 890.5L639.5 890.5Z" stroke="#3416b8" stroke-width="1" fill="none"/>
<text x="0" y="0" font-family='"Liberation Serif",serif' font-size="11.8" fill="#3416b8" stroke="#3416b8" stroke-width="0.12" text-anchor="start" letter-spacing="0.45" transform="translate(655.5 888.1) scale(0.88 1)">PA12</text>
<circle cx="623.5" cy="885.5" r="2.6" fill="#cc1a1a"/>
<text x="580" y="871" font-family='"Liberation Sans",sans-serif' font-size="9" fill="#141460" stroke="#141460" stroke-width="0.15" text-anchor="start" >R9</text>
<text x="598" y="871" font-family='"Liberation Sans",sans-serif' font-size="9" fill="#141460" stroke="#141460" stroke-width="0.15" text-anchor="start" >20</text>
<text x="579" y="901" font-family='"Liberation Sans",sans-serif' font-size="9" fill="#141460" stroke="#141460" stroke-width="0.15" text-anchor="start" >R11</text>
<text x="598" y="901" font-family='"Liberation Sans",sans-serif' font-size="9" fill="#141460" stroke="#141460" stroke-width="0.15" text-anchor="start" >20</text>
<path d="M623.5 885.5L623.5 895.5" stroke="#8c2020" stroke-width="1" fill="none"/>
<rect x="619.5" y="895.5" width="8" height="20" rx="0" stroke="#8c2020" stroke-width="1" fill="none"/>
<path d="M623.5 915.5L623.5 935.5" stroke="#222" stroke-width="1" fill="none"/>
<path d="M617.5 935.5L629.5 935.5" stroke="#333" stroke-width="1"/>
<text x="623.5" y="945.5" font-family='"Liberation Serif",serif' font-size="12" fill="#111" stroke="#111" stroke-width="0.2" text-anchor="middle" >+5V</text>
<text x="629" y="906" font-family='"Liberation Sans",sans-serif' font-size="9" fill="#141460" stroke="#141460" stroke-width="0.15" text-anchor="start" >R10</text>
<text x="629" y="916" font-family='"Liberation Sans",sans-serif' font-size="9" fill="#141460" stroke="#141460" stroke-width="0.15" text-anchor="start" >1.5K</text>
<path d="M539.5 895.5L539.5 905.5" stroke="#2f962f" stroke-width="1" fill="none"/>
<path d="M539.5 905.5L553.5 905.5L553.5 925.5" stroke="#2f962f" stroke-width="1" fill="none"/>
<circle cx="539.5" cy="905.5" r="2.6" fill="#cc1a1a"/>
<path d="M543.5 925.5L563.5 925.5L553.5 932.5Z" stroke="#333" stroke-width="1" fill="none"/>
<path d="M673.5 965.5L668.5 960.5L652.5 960.5L652.5 970.5L668.5 970.5Z" stroke="#3416b8" stroke-width="1" fill="none"/>
<text x="0" y="0" font-family='"Liberation Serif",serif' font-size="11.8" fill="#3416b8" stroke="#3416b8" stroke-width="0.12" text-anchor="end" letter-spacing="0.45" transform="translate(651.0 970.8) scale(0.88 1)">USB 5V</text>
<path d="M673.5 965.5L698.5 965.5" stroke="#2f962f" stroke-width="1" fill="none"/>
<path d="M698.5 965.5L709.5 965.5" stroke="#222" stroke-width="1" fill="none"/>
<path d="M709.5 960.5L709.5 970.5" stroke="#222" stroke-width="1" fill="none"/>
<text x="711" y="970" font-family='"Liberation Serif",serif' font-size="12" fill="#111" stroke="#111" stroke-width="0.2" text-anchor="start" >+5V</text>
<rect x="833.5" y="825.5" width="20" height="50" rx="2" stroke="#8c2020" stroke-width="1" fill="none"/>
<circle cx="849" cy="830" r="1.6" fill="#8c1010"/>
<text x="840" y="823" font-family='"Liberation Sans",sans-serif' font-size="9" fill="#141460" stroke="#141460" stroke-width="0.15" text-anchor="start" >P2</text>
<text x="834" y="885" font-family='"Liberation Sans",sans-serif' font-size="9" fill="#141460" stroke="#141460" stroke-width="0.15" text-anchor="start" >SWD</text>
<text x="844.5" y="840" font-family='"Liberation Sans",sans-serif' font-size="10" fill="#2d1fa0" stroke="#2d1fa0" stroke-width="0.15" text-anchor="start" >1</text>
<path d="M853.5 835.5L864.5 835.5" stroke="#8c2020" stroke-width="1" fill="none"/>
<text x="856" y="835" font-family='"Liberation Sans",sans-serif' font-size="9" fill="#2d1fa0" stroke="#2d1fa0" stroke-width="0.15" text-anchor="start" letter-spacing="0.8">1</text>
<text x="844.5" y="850" font-family='"Liberation Sans",sans-serif' font-size="10" fill="#2d1fa0" stroke="#2d1fa0" stroke-width="0.15" text-anchor="start" >2</text>
<path d="M853.5 845.5L864.5 845.5" stroke="#8c2020" stroke-width="1" fill="none"/>
<text x="856" y="845" font-family='"Liberation Sans",sans-serif' font-size="9" fill="#2d1fa0" stroke="#2d1fa0" stroke-width="0.15" text-anchor="start" letter-spacing="0.8">2</text>
<text x="844.5" y="860" font-family='"Liberation Sans",sans-serif' font-size="10" fill="#2d1fa0" stroke="#2d1fa0" stroke-width="0.15" text-anchor="start" >3</text>
<path d="M853.5 855.5L864.5 855.5" stroke="#8c2020" stroke-width="1" fill="none"/>
<text x="856" y="855" font-family='"Liberation Sans",sans-serif' font-size="9" fill="#2d1fa0" stroke="#2d1fa0" stroke-width="0.15" text-anchor="start" letter-spacing="0.8">3</text>
<text x="844.5" y="870" font-family='"Liberation Sans",sans-serif' font-size="10" fill="#2d1fa0" stroke="#2d1fa0" stroke-width="0.15" text-anchor="start" >4</text>
<path d="M853.5 865.5L864.5 865.5" stroke="#8c2020" stroke-width="1" fill="none"/>
<text x="856" y="865" font-family='"Liberation Sans",sans-serif' font-size="9" fill="#2d1fa0" stroke="#2d1fa0" stroke-width="0.15" text-anchor="start" letter-spacing="0.8">4</text>
<path d="M864.5 835.5L874.5 835.5" stroke="#2f962f" stroke-width="1" fill="none"/>
<path d="M874.5 835.5L879.5 830.5L894.5 830.5L894.5 840.5L879.5 840.5Z" stroke="#3416b8" stroke-width="1" fill="none"/>
<text x="0" y="0" font-family='"Liberation Serif",serif' font-size="11.8" fill="#3416b8" stroke="#3416b8" stroke-width="0.12" text-anchor="start" letter-spacing="0.45" transform="translate(895.5 838.1) scale(0.88 1)">VCC</text>
<path d="M864.5 845.5L1003.5 845.5" stroke="#2f962f" stroke-width="1" fill="none"/>
<circle cx="988.5" cy="845.5" r="2.6" fill="#cc1a1a"/>
<path d="M1003.5 845.5L1008.5 840.5L1023.5 840.5L1023.5 850.5L1008.5 850.5Z" stroke="#3416b8" stroke-width="1" fill="none"/>
<text x="0" y="0" font-family='"Liberation Serif",serif' font-size="11.8" fill="#3416b8" stroke="#3416b8" stroke-width="0.12" text-anchor="start" letter-spacing="0.45" transform="translate(1024.5 848.1) scale(0.88 1)">SWDIO</text>
<path d="M864.5 855.5L909.5 855.5" stroke="#2f962f" stroke-width="1" fill="none"/>
<circle cx="898.5" cy="855.5" r="2.6" fill="#cc1a1a"/>
<path d="M909.5 855.5L914.5 850.5L929.5 850.5L929.5 860.5L914.5 860.5Z" stroke="#3416b8" stroke-width="1" fill="none"/>
<text x="0" y="0" font-family='"Liberation Serif",serif' font-size="11.8" fill="#3416b8" stroke="#3416b8" stroke-width="0.12" text-anchor="start" letter-spacing="0.45" transform="translate(930.5 858.1) scale(0.88 1)">SWCLK</text>
<path d="M864.5 865.5L873.5 865.5L873.5 895.5" stroke="#2f962f" stroke-width="1" fill="none"/>
<path d="M863.5 895.5L883.5 895.5L873.5 902.5Z" stroke="#333" stroke-width="1" fill="none"/>
<path d="M898.5 855.5L898.5 865.5" stroke="#8c2020" stroke-width="1" fill="none"/>
<rect x="894.5" y="865.5" width="8" height="20" rx="0" stroke="#8c2020" stroke-width="1" fill="none"/>
<path d="M898.5 885.5L898.5 905.5" stroke="#222" stroke-width="1" fill="none"/>
<path d="M892.5 905.5L904.5 905.5" stroke="#333" stroke-width="1"/>
<text x="898.5" y="915.5" font-family='"Liberation Serif",serif' font-size="12" fill="#111" stroke="#111" stroke-width="0.2" text-anchor="middle" >VCC</text>
<path d="M988.5 845.5L988.5 855.5" stroke="#8c2020" stroke-width="1" fill="none"/>
<rect x="984.5" y="855.5" width="8" height="20" rx="0" stroke="#8c2020" stroke-width="1" fill="none"/>
<path d="M988.5 875.5L988.5 895.5" stroke="#222" stroke-width="1" fill="none"/>
<path d="M978.5 895.5L998.5 895.5L988.5 902.5Z" stroke="#333" stroke-width="1" fill="none"/>
<text x="906" y="879" font-family='"Liberation Sans",sans-serif' font-size="9" fill="#141460" stroke="#141460" stroke-width="0.15" text-anchor="start" >R7</text>
<text x="906" y="889" font-family='"Liberation Sans",sans-serif' font-size="9" fill="#141460" stroke="#141460" stroke-width="0.15" text-anchor="start" >10K</text>
<text x="996" y="869" font-family='"Liberation Sans",sans-serif' font-size="9" fill="#141460" stroke="#141460" stroke-width="0.15" text-anchor="start" >R8</text>
<text x="996" y="879" font-family='"Liberation Sans",sans-serif' font-size="9" fill="#141460" stroke="#141460" stroke-width="0.15" text-anchor="start" >10K</text>
<path d="M953.5 925.5L947.5 918.5L947.5 905.5L958.5 905.5L958.5 918.5Z" stroke="#3416b8" fill="none"/>
<text x="957" y="904" font-family='"Liberation Serif",serif' font-size="12" fill="#3416b8" stroke="#3416b8" stroke-width="0.12" text-anchor="start" transform="rotate(-90 957 904)">9V --) 5V</text>
<path d="M914.5 945.5L909.5 940.5L893.5 940.5L893.5 950.5L909.5 950.5Z" stroke="#3416b8" stroke-width="1" fill="none"/>
<text x="0" y="0" font-family='"Liberation Serif",serif' font-size="11.8" fill="#3416b8" stroke="#3416b8" stroke-width="0.12" text-anchor="end" letter-spacing="0.45" transform="translate(892.0 950.8) scale(0.88 1)">MOSFET</text>
<path d="M914.5 945.5L930.5 945.5" stroke="#2f962f" stroke-width="1" fill="none"/>
<path d="M930.5 945.5H941.5M941.5 936.5V954.5M944 936V941M944 943V948M944 950.5V954.5M944 938.5H953.5V926M953.5 935.5H963.5V955.5H953.5M944 952.5H953.5M953.5 945.5V969M930.5 945.5V958.5H953.5" stroke="#9a2a2a" fill="none"/>
<path d="M945.5 943.5L951.5 945.5L945.5 947.5ZM951.5 945.5H953.5" fill="none" stroke="#9a2a2a"/>
<path d="M959.5 943.5H967.5L963.5 948.5Z M959.5 948.5H967.5" fill="none" stroke="#9a2a2a"/>
<path d="M934.5 956L940.5 958.5L934.5 961ZM946.5 956L940.5 958.5L946.5 961ZM939 955L942 962" fill="none" stroke="#9a2a2a"/>
<text x="970" y="950" font-family='"Liberation Sans",sans-serif' font-size="9" fill="#141460" stroke="#141460" stroke-width="0.15" text-anchor="start" >Q1</text>
<text x="970" y="959.5" font-family='"Liberation Sans",sans-serif' font-size="9" fill="#141460" stroke="#141460" stroke-width="0.15" text-anchor="start" letter-spacing="0.15">RSR020P05FRATL</text>
<rect x="1303.5" y="301.5" width="30" height="210" rx="2" stroke="#8c2020" stroke-width="1" fill="none"/>
<circle cx="1308" cy="304.5" r="1.6" fill="#8c1010"/>
<text x="1315" y="294" font-family='"Liberation Sans",sans-serif' font-size="9" fill="#141460" stroke="#141460" stroke-width="0.15" text-anchor="start" >P3</text>
<path d="M1283.5 310.5L1278.5 305.5L1262.5 305.5L1262.5 315.5L1278.5 315.5Z" stroke="#3416b8" stroke-width="1" fill="none"/>
<text x="0" y="0" font-family='"Liberation Serif",serif' font-size="11.8" fill="#3416b8" stroke="#3416b8" stroke-width="0.12" text-anchor="end" letter-spacing="0.45" transform="translate(1261.0 315.8) scale(0.88 1)">VBAT</text>
<path d="M1283.5 310.5L1293.5 310.5" stroke="#2f962f" stroke-width="1" fill="none"/>
<path d="M1293.5 310.5L1303.5 310.5" stroke="#8c2020" stroke-width="1" fill="none"/>
<text x="1302" y="310" font-family='"Liberation Sans",sans-serif' font-size="9" fill="#2d1fa0" stroke="#2d1fa0" stroke-width="0.15" text-anchor="end" letter-spacing="0.8">1</text>
<text x="1309" y="315" font-family='"Liberation Sans",sans-serif' font-size="9" fill="#2d1fa0" stroke="#2d1fa0" stroke-width="0.15" text-anchor="start" letter-spacing="0.8">1</text>
<path d="M1283.5 320.5L1278.5 315.5L1262.5 315.5L1262.5 325.5L1278.5 325.5Z" stroke="#3416b8" stroke-width="1" fill="none"/>
<text x="0" y="0" font-family='"Liberation Serif",serif' font-size="11.8" fill="#3416b8" stroke="#3416b8" stroke-width="0.12" text-anchor="end" letter-spacing="0.45" transform="translate(1261.0 325.8) scale(0.88 1)">PC13</text>
<path d="M1283.5 320.5L1293.5 320.5" stroke="#2f962f" stroke-width="1" fill="none"/>
<path d="M1293.5 320.5L1303.5 320.5" stroke="#8c2020" stroke-width="1" fill="none"/>
<text x="1302" y="320" font-family='"Liberation Sans",sans-serif' font-size="9" fill="#2d1fa0" stroke="#2d1fa0" stroke-width="0.15" text-anchor="end" letter-spacing="0.8">2</text>
<text x="1309" y="325" font-family='"Liberation Sans",sans-serif' font-size="9" fill="#2d1fa0" stroke="#2d1fa0" stroke-width="0.15" text-anchor="start" letter-spacing="0.8">2</text>
<path d="M1283.5 330.5L1278.5 325.5L1262.5 325.5L1262.5 335.5L1278.5 335.5Z" stroke="#3416b8" stroke-width="1" fill="none"/>
<text x="0" y="0" font-family='"Liberation Serif",serif' font-size="11.8" fill="#3416b8" stroke="#3416b8" stroke-width="0.12" text-anchor="end" letter-spacing="0.45" transform="translate(1261.0 335.8) scale(0.88 1)">PC14</text>
<path d="M1283.5 330.5L1293.5 330.5" stroke="#2f962f" stroke-width="1" fill="none"/>
<path d="M1293.5 330.5L1303.5 330.5" stroke="#8c2020" stroke-width="1" fill="none"/>
<text x="1302" y="330" font-family='"Liberation Sans",sans-serif' font-size="9" fill="#2d1fa0" stroke="#2d1fa0" stroke-width="0.15" text-anchor="end" letter-spacing="0.8">3</text>
<text x="1309" y="335" font-family='"Liberation Sans",sans-serif' font-size="9" fill="#2d1fa0" stroke="#2d1fa0" stroke-width="0.15" text-anchor="start" letter-spacing="0.8">3</text>
<path d="M1283.5 340.5L1278.5 335.5L1262.5 335.5L1262.5 345.5L1278.5 345.5Z" stroke="#3416b8" stroke-width="1" fill="none"/>
<text x="0" y="0" font-family='"Liberation Serif",serif' font-size="11.8" fill="#3416b8" stroke="#3416b8" stroke-width="0.12" text-anchor="end" letter-spacing="0.45" transform="translate(1261.0 345.8) scale(0.88 1)">PC15</text>
<path d="M1283.5 340.5L1293.5 340.5" stroke="#2f962f" stroke-width="1" fill="none"/>
<path d="M1293.5 340.5L1303.5 340.5" stroke="#8c2020" stroke-width="1" fill="none"/>
<text x="1302" y="340" font-family='"Liberation Sans",sans-serif' font-size="9" fill="#2d1fa0" stroke="#2d1fa0" stroke-width="0.15" text-anchor="end" letter-spacing="0.8">4</text>
<text x="1309" y="345" font-family='"Liberation Sans",sans-serif' font-size="9" fill="#2d1fa0" stroke="#2d1fa0" stroke-width="0.15" text-anchor="start" letter-spacing="0.8">4</text>
<path d="M1283.5 350.5L1278.5 345.5L1262.5 345.5L1262.5 355.5L1278.5 355.5Z" stroke="#3416b8" stroke-width="1" fill="none"/>
<text x="0" y="0" font-family='"Liberation Serif",serif' font-size="11.8" fill="#3416b8" stroke="#3416b8" stroke-width="0.12" text-anchor="end" letter-spacing="0.45" transform="translate(1261.0 355.8) scale(0.88 1)">PA0</text>
<path d="M1283.5 350.5L1293.5 350.5" stroke="#2f962f" stroke-width="1" fill="none"/>
<path d="M1293.5 350.5L1303.5 350.5" stroke="#8c2020" stroke-width="1" fill="none"/>
<text x="1302" y="350" font-family='"Liberation Sans",sans-serif' font-size="9" fill="#2d1fa0" stroke="#2d1fa0" stroke-width="0.15" text-anchor="end" letter-spacing="0.8">5</text>
<text x="1309" y="355" font-family='"Liberation Sans",sans-serif' font-size="9" fill="#2d1fa0" stroke="#2d1fa0" stroke-width="0.15" text-anchor="start" letter-spacing="0.8">5</text>
<path d="M1283.5 360.5L1278.5 355.5L1262.5 355.5L1262.5 365.5L1278.5 365.5Z" stroke="#3416b8" stroke-width="1" fill="none"/>
<text x="0" y="0" font-family='"Liberation Serif",serif' font-size="11.8" fill="#3416b8" stroke="#3416b8" stroke-width="0.12" text-anchor="end" letter-spacing="0.45" transform="translate(1261.0 365.8) scale(0.88 1)">PA1</text>
<path d="M1283.5 360.5L1293.5 360.5" stroke="#2f962f" stroke-width="1" fill="none"/>
<path d="M1293.5 360.5L1303.5 360.5" stroke="#8c2020" stroke-width="1" fill="none"/>
<text x="1302" y="360" font-family='"Liberation Sans",sans-serif' font-size="9" fill="#2d1fa0" stroke="#2d1fa0" stroke-width="0.15" text-anchor="end" letter-spacing="0.8">6</text>
<text x="1309" y="365" font-family='"Liberation Sans",sans-serif' font-size="9" fill="#2d1fa0" stroke="#2d1fa0" stroke-width="0.15" text-anchor="start" letter-spacing="0.8">6</text>
<path d="M1283.5 370.5L1278.5 365.5L1262.5 365.5L1262.5 375.5L1278.5 375.5Z" stroke="#3416b8" stroke-width="1" fill="none"/>
<text x="0" y="0" font-family='"Liberation Serif",serif' font-size="11.8" fill="#3416b8" stroke="#3416b8" stroke-width="0.12" text-anchor="end" letter-spacing="0.45" transform="translate(1261.0 375.8) scale(0.88 1)">PA2</text>
<path d="M1283.5 370.5L1293.5 370.5" stroke="#2f962f" stroke-width="1" fill="none"/>
<path d="M1293.5 370.5L1303.5 370.5" stroke="#8c2020" stroke-width="1" fill="none"/>
<text x="1302" y="370" font-family='"Liberation Sans",sans-serif' font-size="9" fill="#2d1fa0" stroke="#2d1fa0" stroke-width="0.15" text-anchor="end" letter-spacing="0.8">7</text>
<text x="1309" y="375" font-family='"Liberation Sans",sans-serif' font-size="9" fill="#2d1fa0" stroke="#2d1fa0" stroke-width="0.15" text-anchor="start" letter-spacing="0.8">7</text>
<path d="M1283.5 380.5L1278.5 375.5L1262.5 375.5L1262.5 385.5L1278.5 385.5Z" stroke="#3416b8" stroke-width="1" fill="none"/>
<text x="0" y="0" font-family='"Liberation Serif",serif' font-size="11.8" fill="#3416b8" stroke="#3416b8" stroke-width="0.12" text-anchor="end" letter-spacing="0.45" transform="translate(1261.0 385.8) scale(0.88 1)">PA3</text>
<path d="M1283.5 380.5L1293.5 380.5" stroke="#2f962f" stroke-width="1" fill="none"/>
<path d="M1293.5 380.5L1303.5 380.5" stroke="#8c2020" stroke-width="1" fill="none"/>
<text x="1302" y="380" font-family='"Liberation Sans",sans-serif' font-size="9" fill="#2d1fa0" stroke="#2d1fa0" stroke-width="0.15" text-anchor="end" letter-spacing="0.8">8</text>
<text x="1309" y="385" font-family='"Liberation Sans",sans-serif' font-size="9" fill="#2d1fa0" stroke="#2d1fa0" stroke-width="0.15" text-anchor="start" letter-spacing="0.8">8</text>
<path d="M1283.5 390.5L1278.5 385.5L1262.5 385.5L1262.5 395.5L1278.5 395.5Z" stroke="#3416b8" stroke-width="1" fill="none"/>
<text x="0" y="0" font-family='"Liberation Serif",serif' font-size="11.8" fill="#3416b8" stroke="#3416b8" stroke-width="0.12" text-anchor="end" letter-spacing="0.45" transform="translate(1261.0 395.8) scale(0.88 1)">PA4</text>
<path d="M1283.5 390.5L1293.5 390.5" stroke="#2f962f" stroke-width="1" fill="none"/>
<path d="M1293.5 390.5L1303.5 390.5" stroke="#8c2020" stroke-width="1" fill="none"/>
<text x="1302" y="390" font-family='"Liberation Sans",sans-serif' font-size="9" fill="#2d1fa0" stroke="#2d1fa0" stroke-width="0.15" text-anchor="end" letter-spacing="0.8">9</text>
<text x="1309" y="395" font-family='"Liberation Sans",sans-serif' font-size="9" fill="#2d1fa0" stroke="#2d1fa0" stroke-width="0.15" text-anchor="start" letter-spacing="0.8">9</text>
<path d="M1283.5 400.5L1278.5 395.5L1262.5 395.5L1262.5 405.5L1278.5 405.5Z" stroke="#3416b8" stroke-width="1" fill="none"/>
<text x="0" y="0" font-family='"Liberation Serif",serif' font-size="11.8" fill="#3416b8" stroke="#3416b8" stroke-width="0.12" text-anchor="end" letter-spacing="0.45" transform="translate(1261.0 405.8) scale(0.88 1)">PA5</text>
<path d="M1283.5 400.5L1293.5 400.5" stroke="#2f962f" stroke-width="1" fill="none"/>
<path d="M1293.5 400.5L1303.5 400.5" stroke="#8c2020" stroke-width="1" fill="none"/>
<text x="1302" y="400" font-family='"Liberation Sans",sans-serif' font-size="9" fill="#2d1fa0" stroke="#2d1fa0" stroke-width="0.15" text-anchor="end" letter-spacing="0.8">10</text>
<text x="1309" y="405" font-family='"Liberation Sans",sans-serif' font-size="9" fill="#2d1fa0" stroke="#2d1fa0" stroke-width="0.15" text-anchor="start" letter-spacing="0.8">10</text>
<path d="M1283.5 410.5L1278.5 405.5L1262.5 405.5L1262.5 415.5L1278.5 415.5Z" stroke="#3416b8" stroke-width="1" fill="none"/>
<text x="0" y="0" font-family='"Liberation Serif",serif' font-size="11.8" fill="#3416b8" stroke="#3416b8" stroke-width="0.12" text-anchor="end" letter-spacing="0.45" transform="translate(1261.0 415.8) scale(0.88 1)">PA6</text>
<path d="M1283.5 410.5L1293.5 410.5" stroke="#2f962f" stroke-width="1" fill="none"/>
<path d="M1293.5 410.5L1303.5 410.5" stroke="#8c2020" stroke-width="1" fill="none"/>
<text x="1302" y="410" font-family='"Liberation Sans",sans-serif' font-size="9" fill="#2d1fa0" stroke="#2d1fa0" stroke-width="0.15" text-anchor="end" letter-spacing="0.8">11</text>
<text x="1309" y="415" font-family='"Liberation Sans",sans-serif' font-size="9" fill="#2d1fa0" stroke="#2d1fa0" stroke-width="0.15" text-anchor="start" letter-spacing="0.8">11</text>
<path d="M1283.5 420.5L1278.5 415.5L1262.5 415.5L1262.5 425.5L1278.5 425.5Z" stroke="#3416b8" stroke-width="1" fill="none"/>
<text x="0" y="0" font-family='"Liberation Serif",serif' font-size="11.8" fill="#3416b8" stroke="#3416b8" stroke-width="0.12" text-anchor="end" letter-spacing="0.45" transform="translate(1261.0 425.8) scale(0.88 1)">PA7</text>
<path d="M1283.5 420.5L1293.5 420.5" stroke="#2f962f" stroke-width="1" fill="none"/>
<path d="M1293.5 420.5L1303.5 420.5" stroke="#8c2020" stroke-width="1" fill="none"/>
<text x="1302" y="420" font-family='"Liberation Sans",sans-serif' font-size="9" fill="#2d1fa0" stroke="#2d1fa0" stroke-width="0.15" text-anchor="end" letter-spacing="0.8">12</text>
<text x="1309" y="425" font-family='"Liberation Sans",sans-serif' font-size="9" fill="#2d1fa0" stroke="#2d1fa0" stroke-width="0.15" text-anchor="start" letter-spacing="0.8">12</text>
<path d="M1283.5 430.5L1278.5 425.5L1262.5 425.5L1262.5 435.5L1278.5 435.5Z" stroke="#3416b8" stroke-width="1" fill="none"/>
<text x="0" y="0" font-family='"Liberation Serif",serif' font-size="11.8" fill="#3416b8" stroke="#3416b8" stroke-width="0.12" text-anchor="end" letter-spacing="0.45" transform="translate(1261.0 435.8) scale(0.88 1)">PB0</text>
<path d="M1283.5 430.5L1293.5 430.5" stroke="#2f962f" stroke-width="1" fill="none"/>
<path d="M1293.5 430.5L1303.5 430.5" stroke="#8c2020" stroke-width="1" fill="none"/>
<text x="1302" y="430" font-family='"Liberation Sans",sans-serif' font-size="9" fill="#2d1fa0" stroke="#2d1fa0" stroke-width="0.15" text-anchor="end" letter-spacing="0.8">13</text>
<text x="1309" y="435" font-family='"Liberation Sans",sans-serif' font-size="9" fill="#2d1fa0" stroke="#2d1fa0" stroke-width="0.15" text-anchor="start" letter-spacing="0.8">13</text>
<path d="M1283.5 440.5L1278.5 435.5L1262.5 435.5L1262.5 445.5L1278.5 445.5Z" stroke="#3416b8" stroke-width="1" fill="none"/>
<text x="0" y="0" font-family='"Liberation Serif",serif' font-size="11.8" fill="#3416b8" stroke="#3416b8" stroke-width="0.12" text-anchor="end" letter-spacing="0.45" transform="translate(1261.0 445.8) scale(0.88 1)">PB1</text>
<path d="M1283.5 440.5L1293.5 440.5" stroke="#2f962f" stroke-width="1" fill="none"/>
<path d="M1293.5 440.5L1303.5 440.5" stroke="#8c2020" stroke-width="1" fill="none"/>
<text x="1302" y="440" font-family='"Liberation Sans",sans-serif' font-size="9" fill="#2d1fa0" stroke="#2d1fa0" stroke-width="0.15" text-anchor="end" letter-spacing="0.8">14</text>
<text x="1309" y="445" font-family='"Liberation Sans",sans-serif' font-size="9" fill="#2d1fa0" stroke="#2d1fa0" stroke-width="0.15" text-anchor="start" letter-spacing="0.8">14</text>
<path d="M1283.5 450.5L1278.5 445.5L1262.5 445.5L1262.5 455.5L1278.5 455.5Z" stroke="#3416b8" stroke-width="1" fill="none"/>
<text x="0" y="0" font-family='"Liberation Serif",serif' font-size="11.8" fill="#3416b8" stroke="#3416b8" stroke-width="0.12" text-anchor="end" letter-spacing="0.45" transform="translate(1261.0 455.8) scale(0.88 1)">PB10</text>
<path d="M1283.5 450.5L1293.5 450.5" stroke="#2f962f" stroke-width="1" fill="none"/>
<path d="M1293.5 450.5L1303.5 450.5" stroke="#8c2020" stroke-width="1" fill="none"/>
<text x="1302" y="450" font-family='"Liberation Sans",sans-serif' font-size="9" fill="#2d1fa0" stroke="#2d1fa0" stroke-width="0.15" text-anchor="end" letter-spacing="0.8">15</text>
<text x="1309" y="455" font-family='"Liberation Sans",sans-serif' font-size="9" fill="#2d1fa0" stroke="#2d1fa0" stroke-width="0.15" text-anchor="start" letter-spacing="0.8">15</text>
<path d="M1283.5 460.5L1278.5 455.5L1262.5 455.5L1262.5 465.5L1278.5 465.5Z" stroke="#3416b8" stroke-width="1" fill="none"/>
<text x="0" y="0" font-family='"Liberation Serif",serif' font-size="11.8" fill="#3416b8" stroke="#3416b8" stroke-width="0.12" text-anchor="end" letter-spacing="0.45" transform="translate(1261.0 465.8) scale(0.88 1)">PB11</text>
<path d="M1283.5 460.5L1293.5 460.5" stroke="#2f962f" stroke-width="1" fill="none"/>
<path d="M1293.5 460.5L1303.5 460.5" stroke="#8c2020" stroke-width="1" fill="none"/>
<text x="1302" y="460" font-family='"Liberation Sans",sans-serif' font-size="9" fill="#2d1fa0" stroke="#2d1fa0" stroke-width="0.15" text-anchor="end" letter-spacing="0.8">16</text>
<text x="1309" y="465" font-family='"Liberation Sans",sans-serif' font-size="9" fill="#2d1fa0" stroke="#2d1fa0" stroke-width="0.15" text-anchor="start" letter-spacing="0.8">16</text>
<path d="M1283.5 470.5L1278.5 465.5L1262.5 465.5L1262.5 475.5L1278.5 475.5Z" stroke="#3416b8" stroke-width="1" fill="none"/>
<text x="0" y="0" font-family='"Liberation Serif",serif' font-size="11.8" fill="#3416b8" stroke="#3416b8" stroke-width="0.12" text-anchor="end" letter-spacing="0.45" transform="translate(1261.0 475.8) scale(0.88 1)">RESET</text>
<path d="M1283.5 470.5L1293.5 470.5" stroke="#2f962f" stroke-width="1" fill="none"/>
<path d="M1293.5 470.5L1303.5 470.5" stroke="#8c2020" stroke-width="1" fill="none"/>
<text x="1302" y="470" font-family='"Liberation Sans",sans-serif' font-size="9" fill="#2d1fa0" stroke="#2d1fa0" stroke-width="0.15" text-anchor="end" letter-spacing="0.8">17</text>
<text x="1309" y="475" font-family='"Liberation Sans",sans-serif' font-size="9" fill="#2d1fa0" stroke="#2d1fa0" stroke-width="0.15" text-anchor="start" letter-spacing="0.8">17</text>
<path d="M1283.5 480.5L1278.5 475.5L1262.5 475.5L1262.5 485.5L1278.5 485.5Z" stroke="#3416b8" stroke-width="1" fill="none"/>
<text x="0" y="0" font-family='"Liberation Serif",serif' font-size="11.8" fill="#3416b8" stroke="#3416b8" stroke-width="0.12" text-anchor="end" letter-spacing="0.45" transform="translate(1261.0 485.8) scale(0.88 1)">VCC</text>
<path d="M1283.5 480.5L1293.5 480.5" stroke="#2f962f" stroke-width="1" fill="none"/>
<path d="M1293.5 480.5L1303.5 480.5" stroke="#8c2020" stroke-width="1" fill="none"/>
<text x="1302" y="480" font-family='"Liberation Sans",sans-serif' font-size="9" fill="#2d1fa0" stroke="#2d1fa0" stroke-width="0.15" text-anchor="end" letter-spacing="0.8">18</text>
<text x="1309" y="485" font-family='"Liberation Sans",sans-serif' font-size="9" fill="#2d1fa0" stroke="#2d1fa0" stroke-width="0.15" text-anchor="start" letter-spacing="0.8">18</text>
<path d="M1283.5 490.5L1278.5 485.5L1262.5 485.5L1262.5 495.5L1278.5 495.5Z" stroke="#3416b8" stroke-width="1" fill="none"/>
<text x="0" y="0" font-family='"Liberation Serif",serif' font-size="11.8" fill="#3416b8" stroke="#3416b8" stroke-width="0.12" text-anchor="end" letter-spacing="0.45" transform="translate(1261.0 495.8) scale(0.88 1)">GND</text>
<path d="M1283.5 490.5L1293.5 490.5" stroke="#2f962f" stroke-width="1" fill="none"/>
<path d="M1293.5 490.5L1303.5 490.5" stroke="#8c2020" stroke-width="1" fill="none"/>
<text x="1302" y="490" font-family='"Liberation Sans",sans-serif' font-size="9" fill="#2d1fa0" stroke="#2d1fa0" stroke-width="0.15" text-anchor="end" letter-spacing="0.8">19</text>
<text x="1309" y="495" font-family='"Liberation Sans",sans-serif' font-size="9" fill="#2d1fa0" stroke="#2d1fa0" stroke-width="0.15" text-anchor="start" letter-spacing="0.8">19</text>
<path d="M1283.5 500.5L1278.5 495.5L1262.5 495.5L1262.5 505.5L1278.5 505.5Z" stroke="#3416b8" stroke-width="1" fill="none"/>
<text x="0" y="0" font-family='"Liberation Serif",serif' font-size="11.8" fill="#3416b8" stroke="#3416b8" stroke-width="0.12" text-anchor="end" letter-spacing="0.45" transform="translate(1261.0 505.8) scale(0.88 1)">GND</text>
<path d="M1283.5 500.5L1293.5 500.5" stroke="#2f962f" stroke-width="1" fill="none"/>
<path d="M1293.5 500.5L1303.5 500.5" stroke="#8c2020" stroke-width="1" fill="none"/>
<text x="1302" y="500" font-family='"Liberation Sans",sans-serif' font-size="9" fill="#2d1fa0" stroke="#2d1fa0" stroke-width="0.15" text-anchor="end" letter-spacing="0.8">20</text>
<text x="1309" y="505" font-family='"Liberation Sans",sans-serif' font-size="9" fill="#2d1fa0" stroke="#2d1fa0" stroke-width="0.15" text-anchor="start" letter-spacing="0.8">20</text>
<path d="M1247.5 671.5L1259.5 671.5" stroke="#333" stroke-width="1"/>
<text x="1253.5" y="668.5" font-family='"Liberation Serif",serif' font-size="12" fill="#111" stroke="#111" stroke-width="0.2" text-anchor="middle" >+5V</text>
<path d="M1253.5 671.5L1253.5 680.5" stroke="#222" stroke-width="1" fill="none"/>
<path d="M1253.5 680.5L1324.5 680.5" stroke="#2f962f" stroke-width="1" fill="none"/>
<path d="M1324.5 680.5L1334.5 680.5" stroke="#8c2020" stroke-width="1" fill="none"/>
<path d="M1253.5 680.5L1253.5 699.5" stroke="#8c2020" stroke-width="1" fill="none"/>
<path d="M1245.5 699.5L1261.5 699.5" stroke="#8c2020" stroke-width="1" fill="none"/>
<path d="M1245.5 704.5L1261.5 704.5" stroke="#8c2020" stroke-width="1" fill="none"/>
<path d="M1253.5 704.5L1253.5 720.5" stroke="#8c2020" stroke-width="1" fill="none"/>
<text x="1257" y="697" font-family='"Liberation Sans",sans-serif' font-size="10" fill="#222" stroke="#222" stroke-width="0.15" text-anchor="start" >+</text>
<path d="M1253.5 720.5L1303.5 720.5L1303.5 704.5" stroke="#2f962f" stroke-width="1" fill="none"/>
<path d="M1303.5 680.5L1303.5 699.5" stroke="#8c2020" stroke-width="1" fill="none"/>
<path d="M1295.5 699.5L1311.5 699.5" stroke="#8c2020" stroke-width="1" fill="none"/>
<path d="M1295.5 704.5L1311.5 704.5" stroke="#8c2020" stroke-width="1" fill="none"/>
<path d="M1253.5 720.5L1253.5 730.5" stroke="#222" stroke-width="1" fill="none"/>
<path d="M1243.5 730.5L1263.5 730.5L1253.5 737.5Z" stroke="#333" stroke-width="1" fill="none"/>
<circle cx="1253.5" cy="680.5" r="2.6" fill="#cc1a1a"/>
<circle cx="1303.5" cy="680.5" r="2.6" fill="#cc1a1a"/>
<circle cx="1253.5" cy="720.5" r="2.6" fill="#cc1a1a"/>
<rect x="1334.5" y="661.5" width="66" height="29" rx="0" stroke="#8c2020" stroke-width="1" fill="none"/>
<text x="1358" y="648" font-family='"Liberation Sans",sans-serif' font-size="9" fill="#141460" stroke="#141460" stroke-width="0.15" text-anchor="start" >U8</text>
<text x="1358" y="658" font-family='"Liberation Sans",sans-serif' font-size="9" fill="#141460" stroke="#141460" stroke-width="0.15" text-anchor="start" >AMS1117</text>
<text x="1325" y="679" font-family='"Liberation Sans",sans-serif' font-size="9" fill="#2d1fa0" stroke="#2d1fa0" stroke-width="0.15" text-anchor="start" letter-spacing="0.8">3</text>
<text x="1337" y="684" font-family='"Liberation Sans",sans-serif' font-size="10" fill="#2d1fa0" stroke="#2d1fa0" stroke-width="0.15" text-anchor="start" letter-spacing="0.8">In</text>
<text x="1372" y="675" font-family='"Liberation Sans",sans-serif' font-size="10" fill="#2d1fa0" stroke="#2d1fa0" stroke-width="0.15" text-anchor="start" letter-spacing="0.8">TAB</text>
<text x="1374" y="686" font-family='"Liberation Sans",sans-serif' font-size="10" fill="#2d1fa0" stroke="#2d1fa0" stroke-width="0.15" text-anchor="start" letter-spacing="0.8">Out</text>
<text x="1367" y="688" font-family='"Liberation Sans",sans-serif' font-size="10" fill="#2d1fa0" stroke="#2d1fa0" stroke-width="0.15" text-anchor="start" transform="rotate(-90 1367 688)" letter-spacing="0.6">GND</text>
<path d="M1363.5 690.5L1363.5 706.5" stroke="#8c2020" stroke-width="1" fill="none"/>
<path d="M1363.5 706.5L1363.5 730.5" stroke="#2f962f" stroke-width="1" fill="none"/>
<path d="M1353.5 730.5L1373.5 730.5L1363.5 737.5Z" stroke="#333" stroke-width="1" fill="none"/>
<text x="1362" y="704" font-family='"Liberation Sans",sans-serif' font-size="10" fill="#2d1fa0" stroke="#2d1fa0" stroke-width="0.15" text-anchor="start" transform="rotate(-90 1362 704)">1</text>
<text x="1264" y="701" font-family='"Liberation Sans",sans-serif' font-size="9" fill="#141460" stroke="#141460" stroke-width="0.15" text-anchor="start" >C5</text>
<text x="1264" y="711" font-family='"Liberation Sans",sans-serif' font-size="9" fill="#141460" stroke="#141460" stroke-width="0.15" text-anchor="start" >100uF</text>
<text x="1314" y="701" font-family='"Liberation Sans",sans-serif' font-size="9" fill="#141460" stroke="#141460" stroke-width="0.15" text-anchor="start" >C7</text>
<text x="1314" y="711" font-family='"Liberation Sans",sans-serif' font-size="9" fill="#141460" stroke="#141460" stroke-width="0.15" text-anchor="start" >100nF</text>
<text x="1208" y="753" font-family='"Liberation Sans",sans-serif' font-size="9" fill="#141460" stroke="#141460" stroke-width="0.15" text-anchor="start" >DC1</text>
<text x="1208" y="762" font-family='"Liberation Sans",sans-serif' font-size="9" fill="#141460" stroke="#141460" stroke-width="0.15" text-anchor="start" >DC-002-10A</text>
<path d="M1194.5 775.5L1197.5 772.5H1208.5V778.5H1197.5Z M1208.5 772.5H1213.5V778.5H1208.5" stroke="#8c2020" fill="none"/>
<path d="M1213.5 775.5L1238.5 775.5" stroke="#8c2020" stroke-width="1" fill="none"/>
<path d="M1238.5 775.5L1328.5 775.5" stroke="#2f962f" stroke-width="1" fill="none"/>
<path d="M1328.5 775.5L1358.5 775.5" stroke="#8c2020" stroke-width="1" fill="none"/>
<circle cx="1328.5" cy="775.5" r="2.6" fill="#cc1a1a"/>
<text x="1230" y="774" font-family='"Liberation Sans",sans-serif' font-size="10" fill="#2d1fa0" stroke="#2d1fa0" stroke-width="0.15" text-anchor="start" >1</text>
<text x="1230" y="784" font-family='"Liberation Sans",sans-serif' font-size="10" fill="#2d1fa0" stroke="#2d1fa0" stroke-width="0.15" text-anchor="start" >3</text>
<text x="1230" y="794" font-family='"Liberation Sans",sans-serif' font-size="10" fill="#2d1fa0" stroke="#2d1fa0" stroke-width="0.15" text-anchor="start" >2</text>
<path d="M1213.5 785.5L1258.5 785.5L1258.5 795.5" stroke="#2f962f" stroke-width="1" fill="none"/>
<path d="M1213.5 785.5V795.5M1211 792l2.5 3.5l2.5-3.5" stroke="#8c2020" fill="none"/>
<path d="M1194.5 795.5L1200.5 789.5L1206.5 795.5H1238.5" stroke="#8c2020" fill="none"/>
<path d="M1238.5 795.5L1268.5 795.5L1268.5 815.5" stroke="#2f962f" stroke-width="1" fill="none"/>
<circle cx="1258.5" cy="795.5" r="2.6" fill="#cc1a1a"/>
<path d="M1258.5 815.5L1278.5 815.5L1268.5 822.5Z" stroke="#333" stroke-width="1" fill="none"/>
<path d="M1328.5 775.5L1328.5 848.5" stroke="#2f962f" stroke-width="1" fill="none"/>
<path d="M1319.5 848.5L1337.5 848.5" stroke="#8c2020" stroke-width="1" fill="none"/>
<path d="M1319 855.5Q1328 850 1337 855.5" stroke="#8c2020" fill="none"/>
<text x="1319" y="847" font-family='"Liberation Sans",sans-serif' font-size="9" fill="#222" stroke="#222" stroke-width="0.15" text-anchor="start" >+</text>
<path d="M1328.5 853.5L1328.5 885.5L1393.5 885.5" stroke="#2f962f" stroke-width="1" fill="none"/>
<circle cx="1392.5" cy="885.5" r="2.6" fill="#cc1a1a"/>
<text x="1341" y="854" font-family='"Liberation Sans",sans-serif' font-size="9" fill="#141460" stroke="#141460" stroke-width="0.15" text-anchor="start" >C15</text>
<text x="1341" y="864" font-family='"Liberation Sans",sans-serif' font-size="9" fill="#141460" stroke="#141460" stroke-width="0.15" text-anchor="start" >330nF</text>
<rect x="1358.5" y="765.5" width="42" height="31" rx="0" stroke="#8c2020" stroke-width="1" fill="none"/>
<text x="1363" y="779" font-family='"Liberation Sans",sans-serif' font-size="10" fill="#222" stroke="#222" stroke-width="0.15" text-anchor="start" letter-spacing="0.8">VCC</text>
<text x="1380" y="796" font-family='"Liberation Sans",sans-serif' font-size="10" fill="#222" stroke="#222" stroke-width="0.15" text-anchor="start" letter-spacing="0.8">GN</text>
<text x="1348" y="774" font-family='"Liberation Sans",sans-serif' font-size="9" fill="#222" stroke="#222" stroke-width="0.15" text-anchor="start" letter-spacing="0.8">1</text>
<text x="1385" y="752" font-family='"Liberation Sans",sans-serif' font-size="9" fill="#141460" stroke="#141460" stroke-width="0.15" text-anchor="start" >U2</text>
<text x="1385" y="761" font-family='"Liberation Sans",sans-serif' font-size="9" fill="#141460" stroke="#141460" stroke-width="0.15" text-anchor="start" >LM</text>
<path d="M1387.5 796.5L1387.5 830.5" stroke="#8c2020" stroke-width="1" fill="none"/>
<path d="M1387.5 806.5L1387.5 830.5L1393.5 830.5" stroke="#2f962f" stroke-width="1" fill="none"/>
<circle cx="1392.5" cy="830.5" r="2.6" fill="#cc1a1a"/>
<text x="1385" y="808" font-family='"Liberation Sans",sans-serif' font-size="10" fill="#2d1fa0" stroke="#2d1fa0" stroke-width="0.15" text-anchor="start" transform="rotate(-90 1385 808)">2</text>
<path d="M1383.5 907.5L1403.5 907.5L1393.5 914.5Z" stroke="#333" stroke-width="1" fill="none"/>
</g>
</svg>
</body></html>
